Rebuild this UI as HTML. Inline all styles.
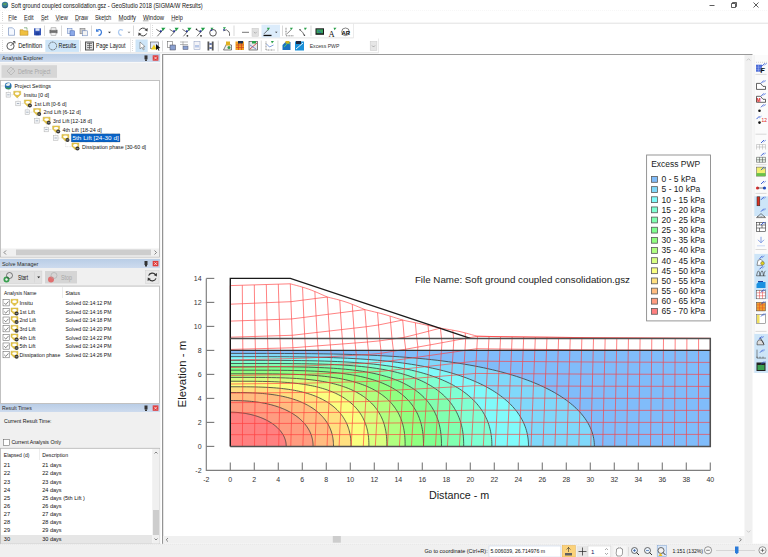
<!DOCTYPE html>
<html><head><meta charset="utf-8">
<style>
*{margin:0;padding:0}
html,body{width:768px;height:557px;overflow:hidden;background:#fff}
svg{position:absolute;left:0;top:0;font-family:"Liberation Sans",sans-serif}
</style></head><body>
<svg width="768" height="557" viewBox="0 0 768 557" font-family="Liberation Sans" font-size="8" fill="#333">
<rect x="0" y="0" width="768" height="557" fill="#fff"/>
<circle cx="5" cy="5" r="3.2" fill="#3a7a9a"/><path d="M2.6,4.2 Q4.5,2.4 6.8,3.2 L6,5.2 Q4,5.6 2.6,4.2Z" fill="#5aa060"/><path d="M3,6.6 Q5,7.8 7.6,6 L7,7.8 Q5,8.8 3,7.4Z" fill="#2a5a7a"/>
<text x="11.00" y="8.00" font-size="6.6" fill="#111" stroke="#111" stroke-width="0" textLength="191.60" lengthAdjust="spacingAndGlyphs" >Soft ground coupled consolidation.gsz - GeoStudio 2018 (SIGMA/W Results)</text>
<line x1="709.50" y1="5.50" x2="714.50" y2="5.50" stroke="#333" stroke-width="0.8" />
<path d="M731.5,3.5 h4 v4 h-4z M732.5,3.5 v-1 h4 v4 h-1" fill="none" stroke="#333" stroke-width="0.8"/>
<path d="M753.5,2.5 L758.5,7.5 M758.5,2.5 L753.5,7.5" stroke="#333" stroke-width="0.8"/>
<line x1="0.00" y1="10.50" x2="768.00" y2="10.50" stroke="#f2f2f2" stroke-width="0.6" stroke-dasharray="1 1"/>
<text x="8.25" y="19.60" font-size="6.6" fill="#202020" stroke="#202020" stroke-width="0" textLength="8.65" lengthAdjust="spacingAndGlyphs" >File</text>
<text x="24.00" y="19.60" font-size="6.6" fill="#202020" stroke="#202020" stroke-width="0" textLength="9.50" lengthAdjust="spacingAndGlyphs" >Edit</text>
<text x="41.00" y="19.60" font-size="6.6" fill="#202020" stroke="#202020" stroke-width="0" textLength="7.40" lengthAdjust="spacingAndGlyphs" >Set</text>
<text x="55.60" y="19.60" font-size="6.6" fill="#202020" stroke="#202020" stroke-width="0" textLength="12.40" lengthAdjust="spacingAndGlyphs" >View</text>
<text x="75.00" y="19.60" font-size="6.6" fill="#202020" stroke="#202020" stroke-width="0" textLength="13.00" lengthAdjust="spacingAndGlyphs" >Draw</text>
<text x="95.00" y="19.60" font-size="6.6" fill="#202020" stroke="#202020" stroke-width="0" textLength="16.25" lengthAdjust="spacingAndGlyphs" >Sketch</text>
<text x="118.50" y="19.60" font-size="6.6" fill="#202020" stroke="#202020" stroke-width="0" textLength="17.50" lengthAdjust="spacingAndGlyphs" >Modify</text>
<text x="142.90" y="19.60" font-size="6.6" fill="#202020" stroke="#202020" stroke-width="0" textLength="21.20" lengthAdjust="spacingAndGlyphs" >Window</text>
<text x="171.25" y="19.60" font-size="6.6" fill="#202020" stroke="#202020" stroke-width="0" textLength="11.50" lengthAdjust="spacingAndGlyphs" >Help</text>
<line x1="8.25" y1="20.80" x2="11.53" y2="20.80" stroke="#555" stroke-width="0.5" />
<line x1="24.00" y1="20.80" x2="27.68" y2="20.80" stroke="#555" stroke-width="0.5" />
<line x1="41.00" y1="20.80" x2="44.29" y2="20.80" stroke="#555" stroke-width="0.5" />
<line x1="55.60" y1="20.80" x2="59.45" y2="20.80" stroke="#555" stroke-width="0.5" />
<line x1="75.00" y1="20.80" x2="79.02" y2="20.80" stroke="#555" stroke-width="0.5" />
<line x1="104.16" y1="20.80" x2="105.64" y2="20.80" stroke="#555" stroke-width="0.5" />
<line x1="118.50" y1="20.80" x2="123.45" y2="20.80" stroke="#555" stroke-width="0.5" />
<line x1="142.90" y1="20.80" x2="148.53" y2="20.80" stroke="#555" stroke-width="0.5" />
<line x1="171.25" y1="20.80" x2="175.29" y2="20.80" stroke="#555" stroke-width="0.5" />
<line x1="2.50" y1="12.00" x2="2.50" y2="22.00" stroke="#bbb" stroke-width="0.6" stroke-dasharray="1 1"/>
<line x1="0.00" y1="23.20" x2="768.00" y2="23.20" stroke="#dedede" stroke-width="0.9" />
<line x1="0.00" y1="37.90" x2="353.50" y2="37.90" stroke="#e2e2e2" stroke-width="0.9" />
<line x1="353.50" y1="23.50" x2="353.50" y2="38.00" stroke="#e6e6e6" stroke-width="0.8" />
<line x1="2.50" y1="25.00" x2="2.50" y2="36.00" stroke="#c0c0c0" stroke-width="0.6" stroke-dasharray="1 1"/>
<line x1="44.50" y1="25.50" x2="44.50" y2="36.00" stroke="#cfcfcf" stroke-width="0.8" />
<line x1="61.50" y1="25.50" x2="61.50" y2="36.00" stroke="#cfcfcf" stroke-width="0.8" />
<line x1="91.50" y1="25.50" x2="91.50" y2="36.00" stroke="#cfcfcf" stroke-width="0.8" />
<line x1="133.50" y1="25.50" x2="133.50" y2="36.00" stroke="#cfcfcf" stroke-width="0.8" />
<line x1="234.00" y1="25.50" x2="234.00" y2="36.00" stroke="#cfcfcf" stroke-width="0.8" />
<line x1="282.50" y1="25.50" x2="282.50" y2="36.00" stroke="#cfcfcf" stroke-width="0.8" />
<line x1="311.00" y1="25.50" x2="311.00" y2="36.00" stroke="#cfcfcf" stroke-width="0.8" />
<line x1="150.50" y1="23.50" x2="150.50" y2="38.00" stroke="#e6e6e6" stroke-width="0.8" />
<line x1="152.50" y1="25.00" x2="152.50" y2="36.00" stroke="#c0c0c0" stroke-width="0.6" stroke-dasharray="1 1"/>
<g transform="translate(0,0.8)">
<path d="M8.5,27 h4 l2,2 v5.5 h-6z" fill="#f4f8ff" stroke="#6a86b8" stroke-width="0.6"/>
<path d="M20,29 h3 l1,1 h4 v4.5 h-8z" fill="#f0c040" stroke="#b08020" stroke-width="0.5"/><path d="M24,27 l3,0 l0,2" fill="none" stroke="#4a8a4a" stroke-width="0.6"/>
<rect x="34" y="27.5" width="7" height="7" fill="#3858b8"/><rect x="35.5" y="27.5" width="4" height="2.5" fill="#dfe6f5"/><rect x="35.5" y="31.5" width="4" height="3" fill="#2040a0"/>
<rect x="49.5" y="29" width="8" height="3.5" fill="#707070"/><rect x="51" y="27" width="5" height="2.5" fill="#e8e8e8" stroke="#777" stroke-width="0.4"/><rect x="51" y="32" width="5" height="2.5" fill="#f0f0f0" stroke="#777" stroke-width="0.4"/>
<rect x="67.5" y="27.5" width="4.5" height="5" fill="#dfe8f8" stroke="#5a7ab8" stroke-width="0.5"/><rect x="70" y="30" width="4.5" height="5" fill="#8aa8e8" stroke="#3a5aa8" stroke-width="0.5"/>
<rect x="80" y="27.5" width="5" height="5.5" fill="#c8c8c8" stroke="#707070" stroke-width="0.5"/><rect x="82.5" y="30" width="5" height="5" fill="#f4f4f4" stroke="#5a7ab8" stroke-width="0.5"/>
<path d="M97,29.5 q4,-2 4.5,2 q-0.5,3 -3,3" fill="none" stroke="#3a7ad8" stroke-width="1.2"/><path d="M96,28 l0,3 l3,0z" fill="#3a7ad8"/>
<path d="M108,31 h3 l-1.5,1.5z" fill="#333"/>
<path d="M123,29.5 q-4,-2 -4.5,2 q0.5,3 3,3" fill="none" stroke="#a8c8f0" stroke-width="1.2"/>
<path d="M127.5,31 h3 l-1.5,1.5z" fill="#888"/>
<g transform="translate(-9.3,-245.8)"><path d="M148.6,275.6 A4,4 0 0 1 155.6,274.8 M156,278.4 A4,4 0 0 1 149,279.2" fill="none" stroke="#444" stroke-width="1"/><path d="M157,273 l-0.2,3.6 l-3.2,-1.6z M147.6,281 l0.2,-3.6 l3.2,1.6z" fill="#444"/></g>
<path d="M156.3,28.5 L160.8,31.5" stroke="#333" stroke-width="0.7"/><path d="M157.3,35.5 L163.8,28" stroke="#333" stroke-width="0.7"/><path d="M161.3,27 h4.2 l-2.6,3.2z" fill="#22a048"/><rect x="159.9" y="29.5" width="1.8" height="1.8" fill="#2a3a9a"/>
<path d="M169.6,28.5 L174.1,31.5" stroke="#333" stroke-width="0.7"/><path d="M170.6,35.5 L177.1,28" stroke="#333" stroke-width="0.7"/><path d="M174.6,27 h4.2 l-2.6,3.2z" fill="#22a048"/><rect x="173.2" y="29.5" width="1.8" height="1.8" fill="#2a3a9a"/>
<path d="M182.4,28.5 L186.9,31.5" stroke="#333" stroke-width="0.7"/><path d="M183.4,35.5 L189.9,28" stroke="#333" stroke-width="0.7"/><path d="M187.4,27 h4.2 l-2.6,3.2z" fill="#22a048"/><rect x="186.0" y="29.5" width="1.8" height="1.8" fill="#2a3a9a"/>
<circle cx="187.4" cy="35" r="0.9" fill="#222"/>
<path d="M196.0,28.5 L200.5,31.5" stroke="#333" stroke-width="0.7"/><path d="M197.0,35.5 L203.5,28" stroke="#333" stroke-width="0.7"/><path d="M201.0,27 h4.2 l-2.6,3.2z" fill="#22a048"/><rect x="199.6" y="29.5" width="1.8" height="1.8" fill="#2a3a9a"/>
<circle cx="201.0" cy="35" r="0.9" fill="#222"/>
<circle cx="196.5" cy="28.5" r="0.8" fill="#222"/>
<circle cx="213" cy="32" r="3.3" fill="none" stroke="#444" stroke-width="0.9"/><path d="M210.5,27 l3,0 l-1.8,2.2z" fill="#22a048"/><rect x="210.8" y="28.6" width="1.5" height="1.5" fill="#2a3a9a"/>
<path d="M223.5,30 q3,-2.5 5.5,1 q0.8,1.5 0.5,4" fill="none" stroke="#444" stroke-width="0.8"/><path d="M223,26.5 l3,0 l-1.8,2.2z" fill="#22a048"/><rect x="223.2" y="28.3" width="1.5" height="1.5" fill="#2a3a9a"/>
<line x1="242.00" y1="31.50" x2="249.00" y2="31.50" stroke="#666" stroke-width="0.9" />
<rect x="252.00" y="27.50" width="6.50" height="8.00" fill="#e0e0e0" stroke="#c8c8c8" stroke-width="0.5" />
<path d="M253.8,31 l1.5,1.5 l1.5,-1.5" fill="none" stroke="#888" stroke-width="0.5"/>
<rect x="261.50" y="23.90" width="18.50" height="12.80" fill="#dcecfb" />
<path d="M264,33 L268,29" stroke="#333" stroke-width="0.7"/><path d="M267,27 l3,0 l-2,3z" fill="#2aa04a"/>
<rect x="263.50" y="34.00" width="8.00" height="1.30" fill="#111" />
<path d="M275,31 h2.5 l-1.25,1.2z" fill="#333"/>
<path d="M286,27 v8 h8" fill="none" stroke="#444" stroke-width="0.7" stroke-dasharray="1 0.6"/><path d="M287,33 l4,-4" stroke="#333" stroke-width="0.6"/><path d="M290,27 l3,0 l-2,2.5z" fill="#2aa04a"/>
<path d="M300,29 l3,3 l1,2.5" stroke="#333" stroke-width="0.7" fill="none"/><path d="M304,27 l3,0 l-2,2.5z" fill="#2aa04a"/><circle cx="300" cy="29" r="0.7" fill="#333"/><circle cx="304.5" cy="34.5" r="0.7" fill="#333"/>
<rect x="315.50" y="27.50" width="8.50" height="6.50" fill="#1a1a1a" />
<rect x="316.50" y="28.50" width="6.50" height="4.00" fill="#3aa060" />
<path d="M318,30 l3,2" stroke="#2060c0" stroke-width="0.8"/>
<text x="328.5" y="36" font-size="8.5" font-family="Liberation Serif" fill="#111">A</text><path d="M333.5,27 l3,0 l-2,2.5z" fill="#2aa04a"/>
<circle cx="345.5" cy="31" r="3.8" fill="none" stroke="#333" stroke-width="0.6"/><text x="341.5" y="34" font-size="6" font-weight="bold" fill="#111">AR</text>
</g>
<line x1="0.00" y1="52.80" x2="378.50" y2="52.80" stroke="#e0e0e0" stroke-width="0.9" />
<line x1="378.50" y1="38.50" x2="378.50" y2="53.00" stroke="#e6e6e6" stroke-width="0.8" />
<line x1="2.50" y1="40.00" x2="2.50" y2="51.00" stroke="#c0c0c0" stroke-width="0.6" stroke-dasharray="1 1"/>
<circle cx="10.5" cy="46" r="3.6" fill="none" stroke="#333" stroke-width="0.8"/><path d="M10.5,46 l4,-4 m-1.5,-0.5 l2,0 l0,2" fill="none" stroke="#333" stroke-width="0.8"/>
<text x="18.20" y="48.20" font-size="6.4" fill="#111" stroke="#111" stroke-width="0" textLength="24.10" lengthAdjust="spacingAndGlyphs" >Definition</text>
<rect x="45.30" y="39.80" width="33.90" height="12.10" fill="#cde5f8" />
<circle cx="52.7" cy="46" r="3.9" fill="none" stroke="#333" stroke-width="0.7" stroke-dasharray="1.2 0.5"/>
<text x="58.60" y="48.20" font-size="6.4" fill="#111" stroke="#111" stroke-width="0" textLength="17.60" lengthAdjust="spacingAndGlyphs" >Results</text>
<line x1="80.50" y1="40.50" x2="80.50" y2="51.50" stroke="#cfcfcf" stroke-width="0.8" />
<rect x="85.00" y="41.50" width="9.00" height="9.00" fill="#555" />
<rect x="86.00" y="42.50" width="7.00" height="7.00" fill="#ddd" />
<path d="M87,43.5 h5 M87,45.5 h5 M87,47.5 h5 M89.5,43 v6" stroke="#444" stroke-width="0.6"/>
<text x="96.00" y="48.20" font-size="6.4" fill="#111" stroke="#111" stroke-width="0" textLength="29.50" lengthAdjust="spacingAndGlyphs" >Page Layout</text>
<line x1="130.50" y1="38.50" x2="130.50" y2="53.00" stroke="#e6e6e6" stroke-width="0.8" />
<line x1="132.50" y1="40.00" x2="132.50" y2="51.00" stroke="#c0c0c0" stroke-width="0.6" stroke-dasharray="1 1"/>
<rect x="135.50" y="39.50" width="12.20" height="12.50" fill="#cde5f8" />
<path d="M140,42 l0,7 l1.8,-1.6 l1.5,2.5 l1,-0.6 l-1.5,-2.3 l2.3,-0.3z" fill="#fff" stroke="#555" stroke-width="0.5"/>
<rect x="150.50" y="42.00" width="8.00" height="6.50" fill="#dfe6f8" stroke="#555" stroke-width="0.6" />
<path d="M151,49.5 l3,-5 l3,5z" fill="#f0d020"/><path d="M156,44 l0,6 l1.5,-1.3 l1.2,2 l0.8,-0.5 l-1.2,-1.8 l2,-0.3z" fill="#111"/>
<line x1="162.50" y1="40.50" x2="162.50" y2="51.50" stroke="#cfcfcf" stroke-width="0.8" />
<line x1="218.30" y1="40.50" x2="218.30" y2="51.50" stroke="#cfcfcf" stroke-width="0.8" />
<line x1="261.25" y1="40.50" x2="261.25" y2="51.50" stroke="#cfcfcf" stroke-width="0.8" />
<line x1="277.90" y1="40.50" x2="277.90" y2="51.50" stroke="#cfcfcf" stroke-width="0.8" />
<rect x="167.5" y="41.5" width="5" height="6" fill="#fff" stroke="#555" stroke-width="0.5"/><rect x="170" y="45" width="5.5" height="5" fill="#8aa0d0" stroke="#445" stroke-width="0.5"/>
<path d="M180,42 h8 M180,44.5 h8 M183,41.5 v4" stroke="#8a8a8a" stroke-width="0.6"/><rect x="183" y="46" width="5" height="3.5" fill="#8aa0d0" stroke="#556" stroke-width="0.5"/>
<rect x="194" y="41.5" width="6" height="8" fill="#f4f4f8" stroke="#8a9ac0" stroke-width="0.5"/><rect x="195" y="45" width="4" height="2.5" fill="#b8c8e8"/>
<rect x="207.5" y="41.5" width="1.8" height="9" fill="#555"/><rect x="211.8" y="41.5" width="1.8" height="9" fill="#555"/><rect x="209.3" y="43" width="2.5" height="2" fill="#6a7aa8"/><rect x="209.3" y="47" width="2.5" height="2" fill="#6a7aa8"/>
<path d="M223.5,50 l3,-6 l5,1 l0,5z" fill="#eee" stroke="#333" stroke-width="0.6"/><rect x="226" y="41.5" width="4" height="4" fill="#e0b020"/><circle cx="229" cy="47.5" r="1.5" fill="#3a9a4a"/>
<rect x="235.5" y="41.5" width="8.5" height="8.5" fill="#f0a020"/><path d="M236,45 h8 M236,47.5 h8 M238.5,42 v8 M241.5,42 v8" stroke="#d04020" stroke-width="0.7"/><rect x="238" y="41" width="5" height="2.5" fill="#203050"/>
<rect x="249" y="41.5" width="8.5" height="8.5" fill="#e8e8e8" stroke="#333" stroke-width="0.6"/><path d="M250,49 l7,-6" stroke="#d03030" stroke-width="0.8"/><path d="M250,45 l6,4" stroke="#3050c0" stroke-width="0.6"/><rect x="252" y="41" width="4" height="2.5" fill="#2aa04a"/>
<path d="M266,41.5 v8.5 h8.5" fill="none" stroke="#444" stroke-width="0.6" stroke-dasharray="1 0.5"/><path d="M266.5,44 l3,3 l4,-2" fill="none" stroke="#3060c0" stroke-width="0.6"/><path d="M271,41 l3,0 l-2,2.5z" fill="#2aa04a"/>
<path d="M282.5,50 l0,-5 l3,-3 l5,0 l0,8z" fill="#1a70c0"/><path d="M284,47 l4,-4 l2,1" fill="none" stroke="#50d060" stroke-width="0.9"/><rect x="285.5" y="41" width="4" height="2.5" fill="#d0b020"/>
<rect x="295" y="41.5" width="9" height="9" fill="#1a90d8"/><path d="M296,49 l7,-6" stroke="#fff" stroke-width="0.9"/><rect x="296" y="41" width="5" height="3" fill="#202840"/>
<text x="309.70" y="48.30" font-size="6.2" fill="#333" stroke="#333" stroke-width="0" textLength="29.70" lengthAdjust="spacingAndGlyphs" >Excess PWP</text>
<rect x="370.20" y="41.50" width="6.70" height="9.00" fill="#e6e6e6" stroke="#c8c8c8" stroke-width="0.5" />
<path d="M372,45.5 l1.5,1.5 l1.5,-1.5" fill="none" stroke="#777" stroke-width="0.5"/><rect x="0.00" y="53.50" width="160.50" height="490.50" fill="#f0f0f0" />
<defs><linearGradient id="hg" x1="0" y1="0" x2="0" y2="1"><stop offset="0" stop-color="#b9cde6"/><stop offset="1" stop-color="#cddbee"/></linearGradient></defs>
<rect x="0.00" y="53.80" width="160.00" height="8.20" fill="url(#hg)" />
<text x="2.00" y="60.00" font-size="6.2" fill="#2a2a2a" stroke="#2a2a2a" stroke-width="0" textLength="41.00" lengthAdjust="spacingAndGlyphs" >Analysis Explorer</text>
<rect x="144.5" y="55.40" width="3" height="4" fill="#333"/><rect x="145" y="59.40" width="2" height="1.5" fill="#333"/>
<rect x="152.70" y="55.30" width="5.70" height="5.40" fill="#de3b3b" />
<path d="M154.2,56.70 l2.7,2.7 M156.9,56.70 l-2.7,2.7" stroke="#fff" stroke-width="0.7"/>
<line x1="0.00" y1="62.40" x2="160.00" y2="62.40" stroke="#fafafa" stroke-width="0.8" />
<rect x="1.50" y="65.20" width="55.50" height="12.60" fill="#d6d6d6" />
<path d="M7,71 l4,-4 l4,4 l-4,4z" fill="none" stroke="#b0b0b0" stroke-width="0.7"/><path d="M9,73 l5,-5" stroke="#b8b8b8" stroke-width="0.6"/>
<text x="18.00" y="73.80" font-size="6.4" fill="#a6a6a6" stroke="#a6a6a6" stroke-width="0" textLength="32.50" lengthAdjust="spacingAndGlyphs" >Define Project</text>
<rect x="0.50" y="80.50" width="159.00" height="176.50" fill="#fff" stroke="#b4b4b4" stroke-width="0.8" />
<line x1="1.00" y1="85.90" x2="4.50" y2="85.90" stroke="#c8c8c8" stroke-width="0.5" />
<line x1="8.40" y1="89.30" x2="8.40" y2="92.50" stroke="#c4c4c4" stroke-width="0.5" stroke-dasharray="0.8 0.7"/>
<line x1="10.70" y1="94.80" x2="13.50" y2="94.80" stroke="#c4c4c4" stroke-width="0.5" stroke-dasharray="0.8 0.7"/>
<line x1="18.10" y1="98.20" x2="18.10" y2="101.20" stroke="#c4c4c4" stroke-width="0.5" stroke-dasharray="0.8 0.7"/>
<line x1="20.40" y1="103.50" x2="24.10" y2="103.50" stroke="#c4c4c4" stroke-width="0.5" stroke-dasharray="0.8 0.7"/>
<line x1="27.40" y1="106.90" x2="27.40" y2="109.90" stroke="#c4c4c4" stroke-width="0.5" stroke-dasharray="0.8 0.7"/>
<line x1="29.70" y1="112.20" x2="33.40" y2="112.20" stroke="#c4c4c4" stroke-width="0.5" stroke-dasharray="0.8 0.7"/>
<line x1="36.90" y1="115.60" x2="36.90" y2="118.50" stroke="#c4c4c4" stroke-width="0.5" stroke-dasharray="0.8 0.7"/>
<line x1="39.20" y1="120.80" x2="42.90" y2="120.80" stroke="#c4c4c4" stroke-width="0.5" stroke-dasharray="0.8 0.7"/>
<line x1="46.40" y1="124.20" x2="46.40" y2="127.20" stroke="#c4c4c4" stroke-width="0.5" stroke-dasharray="0.8 0.7"/>
<line x1="48.70" y1="129.50" x2="52.40" y2="129.50" stroke="#c4c4c4" stroke-width="0.5" stroke-dasharray="0.8 0.7"/>
<line x1="55.70" y1="132.90" x2="55.70" y2="135.70" stroke="#c4c4c4" stroke-width="0.5" stroke-dasharray="0.8 0.7"/>
<line x1="58.00" y1="138.00" x2="61.70" y2="138.00" stroke="#c4c4c4" stroke-width="0.5" stroke-dasharray="0.8 0.7"/>
<line x1="65.70" y1="141.40" x2="65.70" y2="146.70" stroke="#c4c4c4" stroke-width="0.5" stroke-dasharray="0.8 0.7"/>
<line x1="65.70" y1="146.70" x2="71.70" y2="146.70" stroke="#c4c4c4" stroke-width="0.5" stroke-dasharray="0.8 0.7"/>
<circle cx="8.2" cy="85.9" r="3.4" fill="#2a70b0"/><path d="M5.4,84.9 q2,-2.5 5,-1.5 l-0.8,2.2 q-2,1.2 -4.2,-0.7z" fill="#e8f0f0"/><path d="M5.6,87.10000000000001 q3,1.8 5.4,-0.4 l-0.6,2 q-2.5,1.2 -4.6,-0.4z" fill="#3a9a50"/>
<text x="14.40" y="88.10" font-size="6.2" fill="#111" stroke="#111" stroke-width="0" textLength="36.50" lengthAdjust="spacingAndGlyphs" >Project Settings</text>
<path d="M13.7,91.2 h7 v3.2 l-3.5,3.6 l-3.5,-3.6z" fill="#e4c44a" stroke="#c8a830" stroke-width="0.4"/>
<ellipse cx="17.2" cy="93.6" rx="2.3" ry="1.4" fill="#fff"/>
<rect x="6.10" y="92.50" width="4.60" height="4.60" fill="#f4f6f8" stroke="#b0b0b0" stroke-width="0.5" />
<line x1="7.20" y1="94.80" x2="9.60" y2="94.80" stroke="#7a8aa0" stroke-width="0.6" />
<text x="23.70" y="97.00" font-size="6.2" fill="#111" stroke="#111" stroke-width="0" textLength="25.40" lengthAdjust="spacingAndGlyphs" >Insitu [0 d]</text>
<path d="M24.299999999999997,99.9 h7 v3.2 l-3.5,3.6 l-3.5,-3.6z" fill="#e4c44a" stroke="#c8a830" stroke-width="0.4"/>
<ellipse cx="27.799999999999997" cy="102.3" rx="2.3" ry="1.4" fill="#fff"/>
<circle cx="29.9" cy="105.4" r="2" fill="#333"/><path d="M28.9,105.4 h2" stroke="#ddd" stroke-width="0.6"/>
<rect x="15.80" y="101.20" width="4.60" height="4.60" fill="#f4f6f8" stroke="#b0b0b0" stroke-width="0.5" />
<line x1="16.90" y1="103.50" x2="19.30" y2="103.50" stroke="#7a8aa0" stroke-width="0.6" />
<text x="34.30" y="105.70" font-size="6.2" fill="#111" stroke="#111" stroke-width="0" textLength="32.10" lengthAdjust="spacingAndGlyphs" >1st Lift [0-6 d]</text>
<path d="M33.6,108.60000000000001 h7 v3.2 l-3.5,3.6 l-3.5,-3.6z" fill="#e4c44a" stroke="#c8a830" stroke-width="0.4"/>
<ellipse cx="37.1" cy="111.0" rx="2.3" ry="1.4" fill="#fff"/>
<circle cx="39.2" cy="114.10000000000001" r="2" fill="#333"/><path d="M38.2,114.10000000000001 h2" stroke="#ddd" stroke-width="0.6"/>
<rect x="25.10" y="109.90" width="4.60" height="4.60" fill="#f4f6f8" stroke="#b0b0b0" stroke-width="0.5" />
<line x1="26.20" y1="112.20" x2="28.60" y2="112.20" stroke="#7a8aa0" stroke-width="0.6" />
<text x="43.60" y="114.40" font-size="6.2" fill="#111" stroke="#111" stroke-width="0" textLength="37.20" lengthAdjust="spacingAndGlyphs" >2nd Lift [6-12 d]</text>
<path d="M43.1,117.2 h7 v3.2 l-3.5,3.6 l-3.5,-3.6z" fill="#e4c44a" stroke="#c8a830" stroke-width="0.4"/>
<ellipse cx="46.6" cy="119.6" rx="2.3" ry="1.4" fill="#fff"/>
<circle cx="48.7" cy="122.7" r="2" fill="#333"/><path d="M47.7,122.7 h2" stroke="#ddd" stroke-width="0.6"/>
<rect x="34.60" y="118.50" width="4.60" height="4.60" fill="#f4f6f8" stroke="#b0b0b0" stroke-width="0.5" />
<line x1="35.70" y1="120.80" x2="38.10" y2="120.80" stroke="#7a8aa0" stroke-width="0.6" />
<text x="53.10" y="123.00" font-size="6.2" fill="#111" stroke="#111" stroke-width="0" textLength="38.80" lengthAdjust="spacingAndGlyphs" >3rd Lift [12-18 d]</text>
<path d="M52.6,125.9 h7 v3.2 l-3.5,3.6 l-3.5,-3.6z" fill="#e4c44a" stroke="#c8a830" stroke-width="0.4"/>
<ellipse cx="56.1" cy="128.3" rx="2.3" ry="1.4" fill="#fff"/>
<circle cx="58.2" cy="131.4" r="2" fill="#333"/><path d="M57.2,131.4 h2" stroke="#ddd" stroke-width="0.6"/>
<rect x="44.10" y="127.20" width="4.60" height="4.60" fill="#f4f6f8" stroke="#b0b0b0" stroke-width="0.5" />
<line x1="45.20" y1="129.50" x2="47.60" y2="129.50" stroke="#7a8aa0" stroke-width="0.6" />
<text x="62.60" y="131.70" font-size="6.2" fill="#111" stroke="#111" stroke-width="0" textLength="39.20" lengthAdjust="spacingAndGlyphs" >4th Lift [18-24 d]</text>
<path d="M61.900000000000006,134.4 h7 v3.2 l-3.5,3.6 l-3.5,-3.6z" fill="#e4c44a" stroke="#c8a830" stroke-width="0.4"/>
<ellipse cx="65.4" cy="136.8" rx="2.3" ry="1.4" fill="#fff"/>
<circle cx="67.5" cy="139.9" r="2" fill="#333"/><path d="M66.5,139.9 h2" stroke="#ddd" stroke-width="0.6"/>
<rect x="53.40" y="135.70" width="4.60" height="4.60" fill="#f4f6f8" stroke="#b0b0b0" stroke-width="0.5" />
<line x1="54.50" y1="138.00" x2="56.90" y2="138.00" stroke="#7a8aa0" stroke-width="0.6" />
<rect x="71.30" y="133.80" width="48.70" height="8.20" fill="#0a64c8" />
<rect x="71.30" y="133.80" width="48.70" height="8.20" fill="none" stroke="#222" stroke-width="0.4" stroke-dasharray="0.6 0.6"/>
<text x="72.50" y="140.20" font-size="6.2" fill="#fff" stroke="#fff" stroke-width="0" textLength="46.30" lengthAdjust="spacingAndGlyphs" >5th Lift [24-30 d]</text>
<path d="M71.9,143.1 h7 v3.2 l-3.5,3.6 l-3.5,-3.6z" fill="#e4c44a" stroke="#c8a830" stroke-width="0.4"/>
<ellipse cx="75.4" cy="145.5" rx="2.3" ry="1.4" fill="#fff"/>
<circle cx="77.5" cy="148.6" r="2" fill="#333"/><path d="M76.5,148.6 h2" stroke="#ddd" stroke-width="0.6"/>
<text x="81.90" y="148.90" font-size="6.2" fill="#111" stroke="#111" stroke-width="0" textLength="64.20" lengthAdjust="spacingAndGlyphs" >Dissipation phase [30-60 d]</text>
<rect x="1.00" y="248.50" width="158.00" height="7.80" fill="#f0f0f0" />
<rect x="16.00" y="249.50" width="135.00" height="5.80" fill="#cdcdcd" />
<path d="M6,250.5 l-2,2 l2,2 M154.5,250.5 l2,2 l-2,2" fill="none" stroke="#555" stroke-width="0.7"/>
<defs><linearGradient id="hg" x1="0" y1="0" x2="0" y2="1"><stop offset="0" stop-color="#b9cde6"/><stop offset="1" stop-color="#cddbee"/></linearGradient></defs>
<rect x="0.00" y="259.00" width="160.00" height="9.00" fill="url(#hg)" />
<text x="2.00" y="266.00" font-size="6.2" fill="#2a2a2a" stroke="#2a2a2a" stroke-width="0" textLength="36.40" lengthAdjust="spacingAndGlyphs" >Solve Manager</text>
<rect x="144.5" y="261.00" width="3" height="4" fill="#333"/><rect x="145" y="265.00" width="2" height="1.5" fill="#333"/>
<rect x="152.70" y="260.90" width="5.70" height="5.40" fill="#de3b3b" />
<path d="M154.2,262.30 l2.7,2.7 M156.9,262.30 l-2.7,2.7" stroke="#fff" stroke-width="0.7"/>
<rect x="0.50" y="271.00" width="41.40" height="12.50" fill="#e1e1e1" stroke="#cfcfcf" stroke-width="0.5" />
<line x1="34.50" y1="272.00" x2="34.50" y2="282.50" stroke="#cfcfcf" stroke-width="0.5" />
<path d="M37.2,276.5 h3 l-1.5,1.8z" fill="#222"/>
<circle cx="6.5" cy="279.5" r="3" fill="#3aa050"/><circle cx="6.5" cy="279.5" r="1.2" fill="#eee"/><circle cx="9.5" cy="275.5" r="3" fill="none" stroke="#333" stroke-width="0.6"/>
<text x="18.00" y="280.20" font-size="6.4" fill="#111" stroke="#111" stroke-width="0" textLength="10.00" lengthAdjust="spacingAndGlyphs" >Start</text>
<rect x="45.00" y="271.00" width="32.00" height="12.50" fill="#d5d5d5" />
<circle cx="51" cy="279.5" r="3" fill="#e07070"/><circle cx="54" cy="275.5" r="3" fill="none" stroke="#aaa" stroke-width="0.6"/>
<text x="61.00" y="280.20" font-size="6.4" fill="#a8a8a8" stroke="#a8a8a8" stroke-width="0" textLength="11.00" lengthAdjust="spacingAndGlyphs" >Stop</text>
<rect x="145.50" y="270.50" width="13.50" height="13.00" fill="#e8e8e8" stroke="#cfcfcf" stroke-width="0.5" />
<path d="M148.6,275.6 A4,4 0 0 1 155.6,274.8 M156,278.4 A4,4 0 0 1 149,279.2" fill="none" stroke="#333" stroke-width="1.1"/><path d="M157,273 l-0.2,3.6 l-3.2,-1.6z M147.6,281 l0.2,-3.6 l3.2,1.6z" fill="#333"/>
<rect x="0.50" y="286.10" width="159.00" height="117.40" fill="#fff" stroke="#b4b4b4" stroke-width="0.8" />
<text x="4.00" y="294.50" font-size="6.2" fill="#111" stroke="#111" stroke-width="0" textLength="32.50" lengthAdjust="spacingAndGlyphs" >Analysis Name</text>
<line x1="62.50" y1="287.00" x2="62.50" y2="298.00" stroke="#e0e0e0" stroke-width="0.6" />
<text x="65.50" y="294.50" font-size="6.2" fill="#111" stroke="#111" stroke-width="0" textLength="14.50" lengthAdjust="spacingAndGlyphs" >Status</text>
<rect x="3.00" y="299.70" width="6.20" height="6.20" fill="#fff" stroke="#555" stroke-width="0.5" />
<path d="M4.2,302.90 l1.6,1.6 l2.6,-3" fill="none" stroke="#333" stroke-width="0.6"/>
<path d="M11,299.29999999999995 h7 v3.2 l-3.5,3.6 l-3.5,-3.6z" fill="#e4c44a" stroke="#c8a830" stroke-width="0.4"/>
<ellipse cx="14.5" cy="301.7" rx="2.3" ry="1.4" fill="#fff"/>
<text x="19.50" y="305.10" font-size="6.2" fill="#111" stroke="#111" stroke-width="0" textLength="13.50" lengthAdjust="spacingAndGlyphs" >Insitu</text>
<text x="65.50" y="305.10" font-size="6.2" fill="#111" stroke="#111" stroke-width="0" textLength="46.00" lengthAdjust="spacingAndGlyphs" >Solved 02:14:12 PM</text>
<rect x="3.00" y="308.35" width="6.20" height="6.20" fill="#fff" stroke="#555" stroke-width="0.5" />
<path d="M4.2,311.55 l1.6,1.6 l2.6,-3" fill="none" stroke="#333" stroke-width="0.6"/>
<path d="M11,307.94999999999993 h7 v3.2 l-3.5,3.6 l-3.5,-3.6z" fill="#e4c44a" stroke="#c8a830" stroke-width="0.4"/>
<ellipse cx="14.5" cy="310.34999999999997" rx="2.3" ry="1.4" fill="#fff"/>
<circle cx="16.6" cy="313.44999999999993" r="2" fill="#333"/><path d="M15.6,313.44999999999993 h2" stroke="#ddd" stroke-width="0.6"/>
<text x="19.50" y="313.75" font-size="6.2" fill="#111" stroke="#111" stroke-width="0" textLength="15.50" lengthAdjust="spacingAndGlyphs" >1st Lift</text>
<text x="65.50" y="313.75" font-size="6.2" fill="#111" stroke="#111" stroke-width="0" textLength="46.00" lengthAdjust="spacingAndGlyphs" >Solved 02:14:16 PM</text>
<rect x="3.00" y="317.00" width="6.20" height="6.20" fill="#fff" stroke="#555" stroke-width="0.5" />
<path d="M4.2,320.20 l1.6,1.6 l2.6,-3" fill="none" stroke="#333" stroke-width="0.6"/>
<path d="M11,316.59999999999997 h7 v3.2 l-3.5,3.6 l-3.5,-3.6z" fill="#e4c44a" stroke="#c8a830" stroke-width="0.4"/>
<ellipse cx="14.5" cy="319.0" rx="2.3" ry="1.4" fill="#fff"/>
<circle cx="16.6" cy="322.09999999999997" r="2" fill="#333"/><path d="M15.6,322.09999999999997 h2" stroke="#ddd" stroke-width="0.6"/>
<text x="19.50" y="322.40" font-size="6.2" fill="#111" stroke="#111" stroke-width="0" textLength="16.50" lengthAdjust="spacingAndGlyphs" >2nd Lift</text>
<text x="65.50" y="322.40" font-size="6.2" fill="#111" stroke="#111" stroke-width="0" textLength="46.00" lengthAdjust="spacingAndGlyphs" >Solved 02:14:18 PM</text>
<rect x="3.00" y="325.65" width="6.20" height="6.20" fill="#fff" stroke="#555" stroke-width="0.5" />
<path d="M4.2,328.85 l1.6,1.6 l2.6,-3" fill="none" stroke="#333" stroke-width="0.6"/>
<path d="M11,325.24999999999994 h7 v3.2 l-3.5,3.6 l-3.5,-3.6z" fill="#e4c44a" stroke="#c8a830" stroke-width="0.4"/>
<ellipse cx="14.5" cy="327.65" rx="2.3" ry="1.4" fill="#fff"/>
<circle cx="16.6" cy="330.74999999999994" r="2" fill="#333"/><path d="M15.6,330.74999999999994 h2" stroke="#ddd" stroke-width="0.6"/>
<text x="19.50" y="331.05" font-size="6.2" fill="#111" stroke="#111" stroke-width="0" textLength="16.00" lengthAdjust="spacingAndGlyphs" >3rd Lift</text>
<text x="65.50" y="331.05" font-size="6.2" fill="#111" stroke="#111" stroke-width="0" textLength="46.00" lengthAdjust="spacingAndGlyphs" >Solved 02:14:20 PM</text>
<rect x="3.00" y="334.30" width="6.20" height="6.20" fill="#fff" stroke="#555" stroke-width="0.5" />
<path d="M4.2,337.50 l1.6,1.6 l2.6,-3" fill="none" stroke="#333" stroke-width="0.6"/>
<path d="M11,333.9 h7 v3.2 l-3.5,3.6 l-3.5,-3.6z" fill="#e4c44a" stroke="#c8a830" stroke-width="0.4"/>
<ellipse cx="14.5" cy="336.3" rx="2.3" ry="1.4" fill="#fff"/>
<circle cx="16.6" cy="339.4" r="2" fill="#333"/><path d="M15.6,339.4 h2" stroke="#ddd" stroke-width="0.6"/>
<text x="19.50" y="339.70" font-size="6.2" fill="#111" stroke="#111" stroke-width="0" textLength="16.00" lengthAdjust="spacingAndGlyphs" >4th Lift</text>
<text x="65.50" y="339.70" font-size="6.2" fill="#111" stroke="#111" stroke-width="0" textLength="46.00" lengthAdjust="spacingAndGlyphs" >Solved 02:14:22 PM</text>
<rect x="3.00" y="342.95" width="6.20" height="6.20" fill="#fff" stroke="#555" stroke-width="0.5" />
<path d="M4.2,346.15 l1.6,1.6 l2.6,-3" fill="none" stroke="#333" stroke-width="0.6"/>
<path d="M11,342.54999999999995 h7 v3.2 l-3.5,3.6 l-3.5,-3.6z" fill="#e4c44a" stroke="#c8a830" stroke-width="0.4"/>
<ellipse cx="14.5" cy="344.95" rx="2.3" ry="1.4" fill="#fff"/>
<circle cx="16.6" cy="348.04999999999995" r="2" fill="#333"/><path d="M15.6,348.04999999999995 h2" stroke="#ddd" stroke-width="0.6"/>
<text x="19.50" y="348.35" font-size="6.2" fill="#111" stroke="#111" stroke-width="0" textLength="16.00" lengthAdjust="spacingAndGlyphs" >5th Lift</text>
<text x="65.50" y="348.35" font-size="6.2" fill="#111" stroke="#111" stroke-width="0" textLength="46.00" lengthAdjust="spacingAndGlyphs" >Solved 02:14:24 PM</text>
<rect x="3.00" y="351.60" width="6.20" height="6.20" fill="#fff" stroke="#555" stroke-width="0.5" />
<path d="M4.2,354.80 l1.6,1.6 l2.6,-3" fill="none" stroke="#333" stroke-width="0.6"/>
<path d="M11,351.19999999999993 h7 v3.2 l-3.5,3.6 l-3.5,-3.6z" fill="#e4c44a" stroke="#c8a830" stroke-width="0.4"/>
<ellipse cx="14.5" cy="353.59999999999997" rx="2.3" ry="1.4" fill="#fff"/>
<circle cx="16.6" cy="356.69999999999993" r="2" fill="#333"/><path d="M15.6,356.69999999999993 h2" stroke="#ddd" stroke-width="0.6"/>
<text x="19.50" y="357.00" font-size="6.2" fill="#111" stroke="#111" stroke-width="0" textLength="40.80" lengthAdjust="spacingAndGlyphs" >Dissipation  phase</text>
<text x="65.50" y="357.00" font-size="6.2" fill="#111" stroke="#111" stroke-width="0" textLength="46.00" lengthAdjust="spacingAndGlyphs" >Solved 02:14:26 PM</text>
<defs><linearGradient id="hg" x1="0" y1="0" x2="0" y2="1"><stop offset="0" stop-color="#b9cde6"/><stop offset="1" stop-color="#cddbee"/></linearGradient></defs>
<rect x="0.00" y="404.00" width="160.00" height="8.00" fill="url(#hg)" />
<text x="2.00" y="410.00" font-size="6.2" fill="#2a2a2a" stroke="#2a2a2a" stroke-width="0" textLength="29.70" lengthAdjust="spacingAndGlyphs" >Result Times</text>
<rect x="144.5" y="405.50" width="3" height="4" fill="#333"/><rect x="145" y="409.50" width="2" height="1.5" fill="#333"/>
<rect x="152.70" y="405.40" width="5.70" height="5.40" fill="#de3b3b" />
<path d="M154.2,406.80 l2.7,2.7 M156.9,406.80 l-2.7,2.7" stroke="#fff" stroke-width="0.7"/>
<text x="4.00" y="422.60" font-size="6.2" fill="#111" stroke="#111" stroke-width="0" textLength="47.50" lengthAdjust="spacingAndGlyphs" >Current Result Time:</text>
<rect x="3.60" y="439.60" width="6.00" height="6.00" fill="#fff" stroke="#555" stroke-width="0.5" />
<text x="11.40" y="444.40" font-size="6.2" fill="#111" stroke="#111" stroke-width="0" textLength="49.60" lengthAdjust="spacingAndGlyphs" >Current Analysis Only</text>
<rect x="0.50" y="448.30" width="159.00" height="95.50" fill="#fff" stroke="#b4b4b4" stroke-width="0.8" />
<text x="3.80" y="457.20" font-size="6.2" fill="#111" stroke="#111" stroke-width="0" textLength="25.60" lengthAdjust="spacingAndGlyphs" >Elapsed (d)</text>
<line x1="39.50" y1="449.00" x2="39.50" y2="460.00" stroke="#e0e0e0" stroke-width="0.6" />
<text x="42.30" y="457.20" font-size="6.2" fill="#111" stroke="#111" stroke-width="0" textLength="25.70" lengthAdjust="spacingAndGlyphs" >Description</text>
<rect x="1.00" y="535.00" width="151.00" height="8.30" fill="#e6e6e6" />
<text x="3.80" y="467.20" font-size="6.2" fill="#111" stroke="#111" stroke-width="0" textLength="6.34" lengthAdjust="spacingAndGlyphs" >21</text>
<text x="42.30" y="467.20" font-size="6.2" fill="#111" stroke="#111" stroke-width="0" textLength="19.33" lengthAdjust="spacingAndGlyphs" >21 days</text>
<text x="3.80" y="475.35" font-size="6.2" fill="#111" stroke="#111" stroke-width="0" textLength="6.34" lengthAdjust="spacingAndGlyphs" >22</text>
<text x="42.30" y="475.35" font-size="6.2" fill="#111" stroke="#111" stroke-width="0" textLength="19.33" lengthAdjust="spacingAndGlyphs" >22 days</text>
<text x="3.80" y="483.50" font-size="6.2" fill="#111" stroke="#111" stroke-width="0" textLength="6.34" lengthAdjust="spacingAndGlyphs" >23</text>
<text x="42.30" y="483.50" font-size="6.2" fill="#111" stroke="#111" stroke-width="0" textLength="19.33" lengthAdjust="spacingAndGlyphs" >23 days</text>
<text x="3.80" y="491.65" font-size="6.2" fill="#111" stroke="#111" stroke-width="0" textLength="6.34" lengthAdjust="spacingAndGlyphs" >24</text>
<text x="42.30" y="491.65" font-size="6.2" fill="#111" stroke="#111" stroke-width="0" textLength="19.33" lengthAdjust="spacingAndGlyphs" >24 days</text>
<text x="3.80" y="499.80" font-size="6.2" fill="#111" stroke="#111" stroke-width="0" textLength="6.34" lengthAdjust="spacingAndGlyphs" >25</text>
<text x="42.30" y="499.80" font-size="6.2" fill="#111" stroke="#111" stroke-width="0" textLength="42.63" lengthAdjust="spacingAndGlyphs" >25 days (5th Lift )</text>
<text x="3.80" y="507.95" font-size="6.2" fill="#111" stroke="#111" stroke-width="0" textLength="6.34" lengthAdjust="spacingAndGlyphs" >26</text>
<text x="42.30" y="507.95" font-size="6.2" fill="#111" stroke="#111" stroke-width="0" textLength="19.33" lengthAdjust="spacingAndGlyphs" >26 days</text>
<text x="3.80" y="516.10" font-size="6.2" fill="#111" stroke="#111" stroke-width="0" textLength="6.34" lengthAdjust="spacingAndGlyphs" >27</text>
<text x="42.30" y="516.10" font-size="6.2" fill="#111" stroke="#111" stroke-width="0" textLength="19.33" lengthAdjust="spacingAndGlyphs" >27 days</text>
<text x="3.80" y="524.25" font-size="6.2" fill="#111" stroke="#111" stroke-width="0" textLength="6.34" lengthAdjust="spacingAndGlyphs" >28</text>
<text x="42.30" y="524.25" font-size="6.2" fill="#111" stroke="#111" stroke-width="0" textLength="19.33" lengthAdjust="spacingAndGlyphs" >28 days</text>
<text x="3.80" y="532.40" font-size="6.2" fill="#111" stroke="#111" stroke-width="0" textLength="6.34" lengthAdjust="spacingAndGlyphs" >29</text>
<text x="42.30" y="532.40" font-size="6.2" fill="#111" stroke="#111" stroke-width="0" textLength="19.33" lengthAdjust="spacingAndGlyphs" >29 days</text>
<text x="3.80" y="540.55" font-size="6.2" fill="#111" stroke="#111" stroke-width="0" textLength="6.34" lengthAdjust="spacingAndGlyphs" >30</text>
<text x="42.30" y="540.55" font-size="6.2" fill="#111" stroke="#111" stroke-width="0" textLength="19.33" lengthAdjust="spacingAndGlyphs" >30 days</text>
<rect x="152.20" y="449.00" width="7.50" height="94.50" fill="#f0f0f0" />
<rect x="153.00" y="510.00" width="6.00" height="25.00" fill="#cdcdcd" />
<path d="M154.5,453.5 l1.5,-1.5 l1.5,1.5 M154.5,538.5 l1.5,1.5 l1.5,-1.5" fill="none" stroke="#555" stroke-width="0.7"/>
<line x1="162.70" y1="54.00" x2="162.70" y2="544.00" stroke="#7a7a7a" stroke-width="1" />
<line x1="162.50" y1="54.50" x2="752.50" y2="54.50" stroke="#9a9a9a" stroke-width="1" />
<rect x="744.50" y="55.00" width="8.00" height="481.00" fill="#f0f0f0" />
<path d="M746.8,60.5 l1.8,-1.8 l1.8,1.8 M746.8,530.5 l1.8,1.8 l1.8,-1.8" fill="none" stroke="#b0b0b0" stroke-width="0.6"/>
<rect x="163.20" y="536.00" width="581.30" height="7.60" fill="#f0f0f0" />
<path d="M168,538 l-1.8,1.8 l1.8,1.8 M739.5,538 l1.8,1.8 l-1.8,1.8" fill="none" stroke="#555" stroke-width="0.7"/>
<rect x="744.50" y="536.00" width="8.00" height="7.60" fill="#f0f0f0" />
<rect x="332.80" y="536.00" width="8.00" height="6.70" fill="#cdcdcd" />
<rect x="0.00" y="543.80" width="768.00" height="13.20" fill="#f0f0f0" />
<line x1="0.00" y1="544.40" x2="768.00" y2="544.40" stroke="#e2e2e2" stroke-width="0.6" stroke-dasharray="1 1"/>
<text x="424.60" y="552.60" font-size="6.2" fill="#111" stroke="#111" stroke-width="0" textLength="63.10" lengthAdjust="spacingAndGlyphs" >Go to coordinate (Ctrl+R):</text>
<rect x="489.00" y="546.00" width="71.80" height="11.00" fill="#fff" stroke="#c9d8ec" stroke-width="0.6" />
<text x="490.50" y="553.30" font-size="6.2" fill="#111" stroke="#111" stroke-width="0" textLength="54.50" lengthAdjust="spacingAndGlyphs" >5.006039, 26.714976 m</text>
<rect x="562.30" y="545.50" width="13.00" height="11.50" fill="#fbd27a" stroke="#e8b048" stroke-width="0.5" />
<path d="M565,553 h7 v2.5 h-7z" fill="#606060"/><path d="M568.5,547 v5 M566.5,549.5 l2,-2 l2,2" fill="none" stroke="#333" stroke-width="0.6"/>
<rect x="577.00" y="546.00" width="11.00" height="11.00" fill="#e6e6e6" />
<path d="M582.5,547.5 v8 M578.5,551.5 h8" stroke="#222" stroke-width="0.7"/>
<rect x="588.00" y="546.00" width="22.80" height="11.00" fill="#fff" stroke="#d0d0d0" stroke-width="0.5" />
<text x="591.00" y="553.50" font-size="6.2" fill="#202060" stroke="#202060" stroke-width="0" >1</text>
<path d="M605,550 l1.5,-1.5 l1.5,1.5 M605,553 l1.5,1.5 l1.5,-1.5" fill="none" stroke="#555" stroke-width="0.5"/>
<rect x="613.50" y="546.00" width="13.00" height="11.00" fill="#f6f6f6" />
<path d="M617,556 q-1.5,-3 -0.5,-5 v-2 q1,-0.8 1.5,0 v-1 q1,-0.8 1.5,0 v0 q1,-0.8 1.5,0 v1 q1,-0.8 1.5,0 v4 q0,2 -1.5,3z" fill="#fff" stroke="#444" stroke-width="0.5"/>
<line x1="628.50" y1="547.00" x2="628.50" y2="556.00" stroke="#d0d0d0" stroke-width="0.6" />
<circle cx="634.5" cy="550.5" r="3" fill="#eaf2fb" stroke="#333" stroke-width="0.7"/><path d="M636.5,552.5 l2.5,2.5" stroke="#333" stroke-width="1"/>
<path d="M633.0,550.5 h3" stroke="#2050a0" stroke-width="0.6"/>
<path d="M634.5,549 v3" stroke="#2050a0" stroke-width="0.6"/>
<circle cx="647.5" cy="550.5" r="3" fill="#eaf2fb" stroke="#333" stroke-width="0.7"/><path d="M649.5,552.5 l2.5,2.5" stroke="#333" stroke-width="1"/>
<path d="M646.0,550.5 h3" stroke="#2050a0" stroke-width="0.6"/>
<rect x="657.20" y="545.50" width="9.50" height="11.00" fill="#dbe8f8" stroke="#7aa0d0" stroke-width="0.5" />
<circle cx="661" cy="550.5" r="3" fill="#f0f0f0" stroke="#333" stroke-width="0.7"/><path d="M663,552.5 l2.5,2.5" stroke="#333" stroke-width="1"/><path d="M658.5,556 l2,-3 l2,3z" fill="#f0c020"/>
<text x="672.50" y="553.30" font-size="6.2" fill="#111" stroke="#111" stroke-width="0" textLength="30.50" lengthAdjust="spacingAndGlyphs" >1:151 (132%)</text>
<circle cx="708" cy="550.3" r="3.6" fill="#f8f8f8" stroke="#555" stroke-width="0.6"/><path d="M706.2,550.3 h3.6" stroke="#333" stroke-width="0.6"/>
<line x1="716.00" y1="550.50" x2="755.00" y2="550.50" stroke="#cfcfcf" stroke-width="0.8" />
<path d="M735,546.5 h3.5 v6 l-1.75,1.8 l-1.75,-1.8z" fill="#2a7ad8"/>
<circle cx="762.5" cy="550.3" r="3.6" fill="#f8f8f8" stroke="#555" stroke-width="0.6"/><path d="M760.7,550.3 h3.6 M762.5,548.5 v3.6" stroke="#333" stroke-width="0.6"/><rect x="753.80" y="55.00" width="14.20" height="318.00" fill="#fbfbfb" />
<line x1="754.00" y1="55.00" x2="754.00" y2="373.00" stroke="#e4e4e4" stroke-width="0.6" />
<line x1="756.00" y1="62.30" x2="767.00" y2="62.30" stroke="#bdbdbd" stroke-width="0.6" stroke-dasharray="1 1"/>
<rect x="754.30" y="196.30" width="13.70" height="19.80" fill="#cde5f8" />
<rect x="754.30" y="253.90" width="13.70" height="45.20" fill="#cde5f8" />
<rect x="754.30" y="333.90" width="13.70" height="39.00" fill="#cde5f8" />
<line x1="755.50" y1="74.40" x2="766.50" y2="74.40" stroke="#d0d0d0" stroke-width="0.8" />
<line x1="755.50" y1="134.20" x2="766.50" y2="134.20" stroke="#d0d0d0" stroke-width="0.8" />
<line x1="755.50" y1="164.70" x2="766.50" y2="164.70" stroke="#d0d0d0" stroke-width="0.8" />
<line x1="755.50" y1="193.40" x2="766.50" y2="193.40" stroke="#d0d0d0" stroke-width="0.8" />
<line x1="755.50" y1="249.50" x2="766.50" y2="249.50" stroke="#d0d0d0" stroke-width="0.8" />
<line x1="755.50" y1="331.40" x2="766.50" y2="331.40" stroke="#d0d0d0" stroke-width="0.8" />
<g transform="translate(0,-2.30)"><rect x="756.00" y="67.00" width="6.00" height="7.00" fill="#4a6ad8" /><path d="M756,69.5 h6 M756,72 h6 M758.5,67 v7" stroke="#b0c0f0" stroke-width="0.4"/><text x="760.5" y="75" font-size="7" font-weight="bold" font-style="italic" fill="#111">F</text><path d="M762,68.5 l3,-3" stroke="#2a50d0" stroke-width="0.9"/><path d="M764.5,67.5 l2.5,-2" stroke="#4a70e0" stroke-width="0.6"/></g>
<g transform="translate(0,13.90)"><path d="M756.5,75.5 v-6 h4 l2.5,3 h2.5 v3z" fill="#fff" stroke="#222" stroke-width="0.7"/><path d="M761,69.5 l3,-3" stroke="#2a50d0" stroke-width="0.9"/><path d="M763.5,68.5 l2.5,-2" stroke="#4a70e0" stroke-width="0.6"/></g>
<g transform="translate(0,26.80)"><path d="M756.5,75.5 v-6 h4 l2.5,3 h2.5 v3z" fill="#fff" stroke="#222" stroke-width="0.7"/><text x="756.5" y="75" font-size="5" font-weight="bold" fill="#e02020">M</text><path d="M761,69.5 l3,-3" stroke="#2a50d0" stroke-width="0.9"/><path d="M763.5,68.5 l2.5,-2" stroke="#4a70e0" stroke-width="0.6"/></g>
<g transform="translate(0,37.30)"><circle cx="759.5" cy="73.5" r="1.3" fill="#111"/><path d="M761,70 l3,-3" stroke="#2a50d0" stroke-width="0.9"/><path d="M763.5,69 l2.5,-2" stroke="#4a70e0" stroke-width="0.6"/></g>
<g transform="translate(0,48.60)"><circle cx="759.5" cy="74" r="1.3" fill="#111"/><text x="761.5" y="73.5" font-size="4.8" fill="#e02020">12</text><path d="M756.5,70.5 l3,-3" stroke="#2a50d0" stroke-width="0.9"/><path d="M759.0,69.5 l2.5,-2" stroke="#4a70e0" stroke-width="0.6"/></g>
<g transform="translate(0,73.50)"><path d="M756.5,76 v-5 h9 v5 M756.5,73.5 h9 M759.5,71 v5 M762.5,71 v5" fill="none" stroke="#aaa" stroke-width="0.5"/><path d="M761,69.5 l3,-3" stroke="#2a50d0" stroke-width="0.9"/><path d="M763.5,68.5 l2.5,-2" stroke="#4a70e0" stroke-width="0.6"/></g>
<g transform="translate(0,85.80)"><path d="M756.5,71.5 h9 v5 h-9z M756.5,74 h9 M759.5,71.5 v5 M762.5,71.5 v5" fill="#eaf6ea" stroke="#444" stroke-width="0.5"/><path d="M761,70 l3,-3" stroke="#2a50d0" stroke-width="0.9"/><path d="M763.5,69 l2.5,-2" stroke="#4a70e0" stroke-width="0.6"/></g>
<g transform="translate(0,100.60)"><rect x="756.50" y="66.50" width="9.00" height="9.00" fill="#f2f070" stroke="#555" stroke-width="0.5" /><rect x="756.50" y="72.50" width="9.00" height="3.00" fill="#6ac04a" /><path d="M761,69.5 l3,-3" stroke="#2a50d0" stroke-width="0.9"/><path d="M763.5,68.5 l2.5,-2" stroke="#4a70e0" stroke-width="0.6"/></g>
<g transform="translate(0,114.50)"><circle cx="757.5" cy="73.5" r="1.6" fill="#e03030"/><circle cx="764.5" cy="73.5" r="1.6" fill="#2050d0"/><path d="M757.5,73.5 h7" stroke="#333" stroke-width="0.6"/><path d="M761,69.5 l3,-3" stroke="#2a50d0" stroke-width="0.9"/><path d="M763.5,68.5 l2.5,-2" stroke="#4a70e0" stroke-width="0.6"/></g>
<g transform="translate(0,130.30)"><rect x="757.00" y="66.50" width="2.80" height="9.00" fill="#d83020" stroke="#222" stroke-width="0.5" /><path d="M761,69.5 l3,-3" stroke="#2a50d0" stroke-width="0.9"/><path d="M763.5,68.5 l2.5,-2" stroke="#4a70e0" stroke-width="0.6"/></g>
<g transform="translate(0,142.10)"><path d="M756.5,75.5 l4.5,-4 l4.5,4z" fill="none" stroke="#333" stroke-width="0.6"/><path d="M757,74.5 h8" stroke="#333" stroke-width="0.5" stroke-dasharray="0.8 0.6"/><path d="M761,69.5 l3,-3" stroke="#2a50d0" stroke-width="0.9"/><path d="M763.5,68.5 l2.5,-2" stroke="#4a70e0" stroke-width="0.6"/></g>
<g transform="translate(0,156.00)"><rect x="756.50" y="66.50" width="9.00" height="9.00" fill="#fff" stroke="#333" stroke-width="0.6" /><path d="M756.5,69 h9 M756.5,72 h9 M759.5,66.5 v2.5 M762,69 v3 M759.5,72 v3.5" stroke="#333" stroke-width="0.6"/><path d="M761,69 l3,-3" stroke="#2a50d0" stroke-width="0.9"/><path d="M763.5,68 l2.5,-2" stroke="#4a70e0" stroke-width="0.6"/></g>
<g transform="translate(0,169.80)"><path d="M758,70 l3,3 l3,-3 M761,67 v6" fill="none" stroke="#6a8ae0" stroke-width="0.8"/><path d="M757,76 h8" stroke="#aac0f0" stroke-width="0.6"/></g>
<g transform="translate(0,189.30)"><path d="M757,76 l1,-5 l3,-1 l2.5,3 l-1,3z" fill="#fff" stroke="#333" stroke-width="0.5"/><circle cx="762.5" cy="74" r="1.8" fill="#e0d020" stroke="#444" stroke-width="0.4"/><path d="M759.5,69.5 l3,-3" stroke="#2a50d0" stroke-width="0.9"/><path d="M762.0,68.5 l2.5,-2" stroke="#4a70e0" stroke-width="0.6"/></g>
<g transform="translate(0,199.80)"><path d="M756.5,76 q1,-5 2,-5 q1,0 1.5,5 q1,-5 2,-5 q1,0 1.5,5 q1,-5 2,-5" fill="none" stroke="#333" stroke-width="0.6"/><path d="M756.5,76 h9" stroke="#333" stroke-width="0.6"/><path d="M759.5,69.5 l3,-3" stroke="#2a50d0" stroke-width="0.9"/><path d="M762.0,68.5 l2.5,-2" stroke="#4a70e0" stroke-width="0.6"/></g>
<g transform="translate(0,212.00)"><path d="M756.5,76 v-4 l2,-2 h7 v6z" fill="#1a90e0"/><path d="M758,69.5 h5" stroke="#2040a0" stroke-width="1"/></g>
<g transform="translate(0,223.30)"><rect x="756.50" y="67.00" width="9.00" height="8.50" fill="#fff" stroke="#444" stroke-width="0.5" /><path d="M756.5,69.5 h9 M756.5,72.5 h9 M759.5,67 v8.5 M762.5,67 v8.5" stroke="#e04040" stroke-width="0.5"/><path d="M761,69 l3,-3" stroke="#2a50d0" stroke-width="0.9"/><path d="M763.5,68 l2.5,-2" stroke="#4a70e0" stroke-width="0.6"/></g>
<g transform="translate(0,235.40)"><rect x="756.50" y="67.00" width="9.00" height="8.50" fill="#f0a030" stroke="#444" stroke-width="0.5" /><path d="M756.5,69.5 h9 M756.5,72.5 h9 M759.5,67 v8.5 M762.5,67 v8.5" stroke="#e05020" stroke-width="0.5"/><path d="M761,69 l3,-3" stroke="#2a50d0" stroke-width="0.9"/><path d="M763.5,68 l2.5,-2" stroke="#4a70e0" stroke-width="0.6"/></g>
<g transform="translate(0,247.50)"><rect x="756.50" y="67.00" width="9.00" height="9.00" fill="#fff" stroke="#555" stroke-width="0.5" /><rect x="757.00" y="67.50" width="2.50" height="8.00" fill="#f0e060" /><path d="M761,69 l3,-3" stroke="#2a50d0" stroke-width="0.9"/><path d="M763.5,68 l2.5,-2" stroke="#4a70e0" stroke-width="0.6"/></g>
<g transform="translate(0,269.80)"><path d="M757,75 q0,-5 3,-5 q3,0 4,5z" fill="#ddd" stroke="#333" stroke-width="0.6"/><path d="M760,67.5 l4,7" stroke="#333" stroke-width="0.7"/><path d="M759,69.5 l3,-3" stroke="#2a50d0" stroke-width="0.9"/><path d="M761.5,68.5 l2.5,-2" stroke="#4a70e0" stroke-width="0.6"/></g>
<g transform="translate(0,282.60)"><path d="M757,67 v8.5 h9 M757,75.5 v-1.5 M760,75.5 v-1.5 M763,75.5 v-1.5" fill="none" stroke="#444" stroke-width="0.6"/><path d="M760,70 l3,-3" stroke="#2a50d0" stroke-width="0.9"/><path d="M762.5,69 l2.5,-2" stroke="#4a70e0" stroke-width="0.6"/></g>
<g transform="translate(0,295.50)"><rect x="756.50" y="67.00" width="9.00" height="8.50" fill="#222" /><rect x="757.50" y="69.50" width="7.00" height="5.00" fill="#3aa050" /><path d="M761,69 l3,-3" stroke="#2a50d0" stroke-width="0.9"/><path d="M763.5,68 l2.5,-2" stroke="#4a70e0" stroke-width="0.6"/></g>
<rect x="230.30" y="350.40" width="480.00" height="96.00" fill="#80bcfa"/>
<path d="M594.38,446.40 L594.34,444.39 L594.21,442.45 L594.01,440.53 L593.72,438.64 L593.35,436.75 L592.89,434.88 L592.36,433.02 L591.74,431.18 L591.03,429.34 L590.25,427.52 L589.38,425.71 L588.43,423.91 L587.39,422.12 L586.28,420.34 L585.07,418.58 L583.79,416.83 L582.42,415.09 L580.97,413.37 L579.43,411.66 L577.81,409.97 L576.11,408.29 L574.32,406.63 L572.44,404.98 L570.48,403.36 L568.44,401.75 L566.31,400.16 L564.09,398.59 L561.79,397.03 L559.40,395.50 L556.92,393.99 L554.36,392.49 L551.71,391.02 L548.96,389.57 L546.13,388.15 L543.21,386.74 L540.20,385.36 L537.10,384.01 L533.90,382.67 L530.62,381.36 L527.23,380.08 L523.76,378.82 L520.18,377.59 L516.51,376.39 L512.74,375.21 L508.87,374.06 L504.90,372.93 L500.82,371.84 L496.64,370.77 L492.36,369.73 L487.96,368.72 L483.45,367.75 L478.82,366.80 L474.08,365.88 L469.21,364.99 L464.22,364.13 L459.10,363.30 L453.85,362.51 L448.45,361.74 L442.91,361.01 L437.22,360.31 L431.37,359.65 L425.35,359.01 L419.16,358.41 L412.77,357.84 L406.18,357.31 L399.37,356.81 L392.32,356.34 L385.02,355.91 L377.43,355.51 L369.52,355.14 L361.24,354.81 L352.56,354.52 L343.39,354.26 L333.63,354.03 L323.16,353.84 L311.77,353.68 L299.10,353.56 L284.51,353.47 L266.36,353.42 L230.30,353.40 L230.30,446.40 Z" fill="#80d8fa"/>
<path d="M528.50,446.40 L528.47,444.08 L528.37,441.98 L528.20,439.96 L527.97,437.99 L527.68,436.05 L527.32,434.15 L526.89,432.27 L526.40,430.42 L525.84,428.59 L525.21,426.77 L524.52,424.98 L523.76,423.21 L522.94,421.45 L522.05,419.71 L521.09,418.00 L520.07,416.29 L518.98,414.61 L517.82,412.95 L516.60,411.30 L515.31,409.67 L513.95,408.06 L512.53,406.47 L511.03,404.89 L509.47,403.34 L507.84,401.81 L506.14,400.29 L504.37,398.80 L502.54,397.33 L500.63,395.88 L498.65,394.44 L496.61,393.04 L494.49,391.65 L492.30,390.28 L490.04,388.94 L487.70,387.62 L485.30,386.32 L482.82,385.05 L480.26,383.80 L477.63,382.58 L474.92,381.38 L472.14,380.20 L469.28,379.05 L466.34,377.93 L463.32,376.83 L460.22,375.76 L457.03,374.71 L453.76,373.69 L450.41,372.70 L446.96,371.74 L443.43,370.80 L439.80,369.89 L436.08,369.01 L432.27,368.16 L428.35,367.34 L424.33,366.54 L420.20,365.78 L415.97,365.04 L411.61,364.34 L407.14,363.66 L402.54,363.01 L397.81,362.40 L392.93,361.81 L387.91,361.26 L382.73,360.73 L377.38,360.24 L371.84,359.78 L366.11,359.35 L360.16,358.95 L353.96,358.58 L347.50,358.25 L340.73,357.94 L333.61,357.67 L326.07,357.43 L318.04,357.22 L309.39,357.04 L299.94,356.90 L289.40,356.78 L277.19,356.70 L261.86,356.66 L230.30,356.64 L230.30,446.40 Z" fill="#80fafa"/>
<path d="M491.90,446.40 L491.87,443.79 L491.80,441.56 L491.67,439.46 L491.49,437.44 L491.25,435.48 L490.97,433.57 L490.63,431.70 L490.24,429.86 L489.80,428.05 L489.31,426.27 L488.77,424.52 L488.17,422.79 L487.52,421.09 L486.82,419.40 L486.06,417.74 L485.25,416.11 L484.39,414.49 L483.48,412.89 L482.51,411.32 L481.49,409.77 L480.42,408.23 L479.29,406.72 L478.10,405.23 L476.87,403.76 L475.57,402.31 L474.23,400.88 L472.82,399.47 L471.36,398.08 L469.85,396.72 L468.28,395.37 L466.65,394.05 L464.96,392.75 L463.21,391.47 L461.41,390.22 L459.54,388.99 L457.62,387.78 L455.63,386.59 L453.59,385.43 L451.48,384.29 L449.30,383.17 L447.07,382.08 L444.76,381.01 L442.39,379.97 L439.96,378.95 L437.45,377.96 L434.87,376.99 L432.22,376.05 L429.50,375.13 L426.70,374.24 L423.82,373.38 L420.87,372.54 L417.83,371.73 L414.70,370.94 L411.49,370.18 L408.19,369.45 L404.79,368.75 L401.29,368.07 L397.69,367.42 L393.98,366.80 L390.15,366.21 L386.20,365.64 L382.12,365.10 L377.91,364.59 L373.55,364.11 L369.03,363.66 L364.33,363.24 L359.45,362.84 L354.36,362.48 L349.04,362.14 L343.45,361.83 L337.57,361.55 L331.34,361.30 L324.70,361.08 L317.56,360.89 L309.80,360.73 L301.22,360.60 L291.51,360.49 L280.03,360.42 L265.15,360.37 L230.30,360.36 L230.30,446.40 Z" fill="#80ffd2"/>
<path d="M463.70,446.40 L463.68,443.48 L463.62,441.13 L463.51,438.96 L463.37,436.90 L463.18,434.91 L462.95,432.99 L462.67,431.12 L462.36,429.30 L462.00,427.52 L461.60,425.76 L461.16,424.05 L460.68,422.36 L460.15,420.70 L459.58,419.07 L458.97,417.46 L458.32,415.88 L457.62,414.32 L456.88,412.79 L456.09,411.28 L455.26,409.79 L454.39,408.32 L453.47,406.88 L452.51,405.46 L451.50,404.06 L450.45,402.68 L449.35,401.32 L448.21,399.99 L447.02,398.68 L445.78,397.39 L444.50,396.12 L443.17,394.87 L441.79,393.65 L440.36,392.44 L438.89,391.26 L437.36,390.11 L435.78,388.97 L434.15,387.86 L432.47,386.77 L430.74,385.70 L428.95,384.66 L427.11,383.64 L425.21,382.64 L423.26,381.67 L421.25,380.72 L419.18,379.80 L417.04,378.90 L414.85,378.02 L412.59,377.17 L410.26,376.34 L407.87,375.53 L405.41,374.75 L402.87,374.00 L400.27,373.27 L397.58,372.57 L394.81,371.89 L391.95,371.24 L389.01,370.61 L385.98,370.01 L382.84,369.43 L379.60,368.88 L376.26,368.36 L372.79,367.86 L369.20,367.39 L365.47,366.95 L361.60,366.53 L357.56,366.14 L353.35,365.77 L348.94,365.43 L344.31,365.12 L339.44,364.84 L334.28,364.58 L328.79,364.35 L322.90,364.15 L316.52,363.97 L309.54,363.82 L301.75,363.70 L292.81,363.60 L282.08,363.53 L267.81,363.49 L230.30,363.48 L230.30,446.40 Z" fill="#80ffb0"/>
<path d="M441.50,446.40 L441.48,443.39 L441.42,441.03 L441.33,438.88 L441.20,436.85 L441.03,434.90 L440.82,433.02 L440.57,431.20 L440.29,429.42 L439.96,427.68 L439.60,425.99 L439.20,424.33 L438.77,422.70 L438.29,421.09 L437.77,419.52 L437.22,417.97 L436.63,416.45 L436.00,414.96 L435.32,413.49 L434.61,412.04 L433.86,410.61 L433.07,409.21 L432.24,407.83 L431.37,406.47 L430.46,405.14 L429.51,403.82 L428.52,402.53 L427.48,401.26 L426.41,400.01 L425.29,398.78 L424.13,397.58 L422.92,396.39 L421.67,395.23 L420.38,394.09 L419.05,392.97 L417.66,391.87 L416.24,390.79 L414.76,389.74 L413.24,388.71 L411.67,387.70 L410.06,386.71 L408.39,385.74 L406.67,384.80 L404.91,383.88 L403.08,382.98 L401.21,382.11 L399.28,381.25 L397.29,380.43 L395.25,379.62 L393.15,378.84 L390.98,378.08 L388.75,377.34 L386.46,376.63 L384.10,375.94 L381.67,375.28 L379.16,374.64 L376.58,374.03 L373.92,373.43 L371.17,372.87 L368.33,372.33 L365.40,371.81 L362.37,371.31 L359.24,370.85 L355.99,370.40 L352.61,369.98 L349.11,369.59 L345.46,369.22 L341.64,368.88 L337.66,368.56 L333.47,368.27 L329.06,368.00 L324.39,367.76 L319.42,367.54 L314.09,367.35 L308.32,367.18 L302.00,367.04 L294.95,366.92 L286.87,366.84 L277.15,366.77 L264.24,366.73 L230.30,366.72 L230.30,446.40 Z" fill="#80ff90"/>
<path d="M423.50,446.40 L423.48,443.32 L423.43,440.98 L423.34,438.85 L423.22,436.86 L423.06,434.96 L422.86,433.13 L422.63,431.36 L422.36,429.64 L422.06,427.97 L421.72,426.33 L421.35,424.73 L420.94,423.16 L420.49,421.63 L420.01,420.12 L419.49,418.64 L418.94,417.18 L418.35,415.76 L417.72,414.35 L417.05,412.97 L416.35,411.61 L415.61,410.28 L414.84,408.97 L414.02,407.68 L413.17,406.41 L412.28,405.16 L411.35,403.93 L410.38,402.73 L409.38,401.54 L408.33,400.38 L407.25,399.24 L406.12,398.12 L404.95,397.02 L403.75,395.94 L402.50,394.88 L401.21,393.84 L399.88,392.83 L398.50,391.83 L397.08,390.86 L395.62,389.91 L394.11,388.98 L392.55,388.07 L390.95,387.18 L389.30,386.31 L387.61,385.47 L385.86,384.64 L384.06,383.84 L382.21,383.06 L380.31,382.31 L378.35,381.57 L376.33,380.86 L374.26,380.17 L372.13,379.50 L369.93,378.85 L367.67,378.23 L365.34,377.63 L362.95,377.05 L360.48,376.50 L357.93,375.96 L355.30,375.45 L352.58,374.97 L349.77,374.51 L346.87,374.07 L343.86,373.65 L340.74,373.26 L337.50,372.89 L334.13,372.54 L330.61,372.22 L326.94,371.92 L323.08,371.65 L319.02,371.40 L314.73,371.17 L310.16,370.97 L305.28,370.79 L300.00,370.63 L294.23,370.50 L287.80,370.39 L280.45,370.31 L271.65,370.25 L260.03,370.21 L230.30,370.20 L230.30,446.40 Z" fill="#90ff80"/>
<path d="M405.14,446.40 L405.12,443.47 L405.07,441.23 L404.99,439.21 L404.87,437.31 L404.72,435.50 L404.53,433.76 L404.31,432.07 L404.06,430.43 L403.77,428.84 L403.45,427.28 L403.10,425.75 L402.71,424.26 L402.28,422.80 L401.83,421.36 L401.33,419.95 L400.81,418.56 L400.25,417.20 L399.65,415.87 L399.02,414.55 L398.35,413.26 L397.65,411.98 L396.92,410.73 L396.14,409.50 L395.34,408.30 L394.49,407.11 L393.61,405.94 L392.70,404.79 L391.74,403.66 L390.75,402.56 L389.73,401.47 L388.66,400.40 L387.56,399.35 L386.42,398.32 L385.24,397.32 L384.02,396.33 L382.76,395.36 L381.46,394.41 L380.12,393.48 L378.74,392.58 L377.32,391.69 L375.86,390.82 L374.35,389.98 L372.80,389.15 L371.20,388.35 L369.56,387.56 L367.87,386.80 L366.13,386.06 L364.34,385.33 L362.51,384.63 L360.62,383.95 L358.68,383.30 L356.68,382.66 L354.63,382.04 L352.52,381.45 L350.34,380.88 L348.11,380.33 L345.80,379.80 L343.43,379.29 L340.98,378.81 L338.46,378.34 L335.85,377.90 L333.16,377.48 L330.38,377.09 L327.49,376.71 L324.50,376.36 L321.39,376.03 L318.15,375.73 L314.78,375.44 L311.24,375.18 L307.53,374.94 L303.61,374.72 L299.45,374.53 L295.02,374.36 L290.24,374.21 L285.04,374.09 L279.27,373.98 L272.72,373.90 L264.94,373.85 L254.80,373.81 L230.30,373.80 L230.30,446.40 Z" fill="#b0ff80"/>
<path d="M386.90,446.40 L386.88,443.79 L386.84,441.75 L386.76,439.89 L386.65,438.13 L386.50,436.44 L386.33,434.81 L386.12,433.23 L385.88,431.70 L385.61,430.19 L385.31,428.72 L384.97,427.28 L384.61,425.87 L384.21,424.49 L383.78,423.12 L383.31,421.78 L382.82,420.47 L382.29,419.17 L381.73,417.90 L381.14,416.64 L380.51,415.41 L379.85,414.20 L379.16,413.00 L378.43,411.83 L377.67,410.67 L376.88,409.53 L376.05,408.41 L375.19,407.31 L374.30,406.23 L373.37,405.17 L372.40,404.12 L371.41,403.09 L370.37,402.09 L369.30,401.10 L368.20,400.13 L367.05,399.18 L365.88,398.25 L364.66,397.33 L363.41,396.44 L362.12,395.56 L360.79,394.71 L359.42,393.87 L358.01,393.06 L356.56,392.26 L355.08,391.48 L353.55,390.72 L351.97,389.99 L350.35,389.27 L348.69,388.57 L346.99,387.89 L345.23,387.24 L343.43,386.60 L341.58,385.98 L339.68,385.39 L337.72,384.81 L335.71,384.26 L333.65,383.73 L331.52,383.21 L329.33,382.72 L327.08,382.25 L324.76,381.81 L322.36,381.38 L319.89,380.97 L317.34,380.59 L314.70,380.23 L311.97,379.88 L309.14,379.57 L306.19,379.27 L303.12,378.99 L299.92,378.74 L296.56,378.51 L293.02,378.30 L289.29,378.11 L285.31,377.94 L281.05,377.80 L276.42,377.68 L271.32,377.58 L265.57,377.50 L258.79,377.44 L250.09,377.41 L230.30,377.40 L230.30,446.40 Z" fill="#d8ff80"/>
<path d="M368.90,446.40 L368.88,444.10 L368.84,442.26 L368.76,440.55 L368.66,438.93 L368.52,437.37 L368.35,435.86 L368.15,434.40 L367.92,432.96 L367.66,431.56 L367.37,430.18 L367.05,428.83 L366.70,427.51 L366.32,426.20 L365.90,424.92 L365.46,423.66 L364.98,422.42 L364.48,421.19 L363.94,419.99 L363.37,418.80 L362.77,417.63 L362.14,416.48 L361.48,415.34 L360.78,414.23 L360.05,413.13 L359.30,412.04 L358.51,410.98 L357.69,409.93 L356.83,408.90 L355.95,407.88 L355.03,406.89 L354.08,405.91 L353.09,404.95 L352.07,404.00 L351.02,403.07 L349.94,402.16 L348.82,401.27 L347.67,400.40 L346.48,399.54 L345.26,398.70 L344.00,397.88 L342.70,397.08 L341.37,396.30 L340.01,395.53 L338.60,394.79 L337.16,394.06 L335.68,393.35 L334.16,392.66 L332.60,391.99 L331.00,391.34 L329.36,390.71 L327.68,390.10 L325.95,389.51 L324.17,388.93 L322.35,388.38 L320.48,387.85 L318.57,387.34 L316.60,386.84 L314.57,386.37 L312.49,385.92 L310.35,385.49 L308.15,385.07 L305.89,384.68 L303.56,384.31 L301.15,383.96 L298.66,383.64 L296.09,383.33 L293.42,383.04 L290.66,382.78 L287.78,382.53 L284.77,382.31 L281.63,382.10 L278.32,381.92 L274.81,381.76 L271.08,381.62 L267.06,381.51 L262.67,381.41 L257.77,381.34 L252.09,381.28 L244.97,381.25 L230.30,381.24 L230.30,446.40 Z" fill="#faff80"/>
<path d="M351.02,446.40 L351.01,444.44 L350.96,442.83 L350.89,441.32 L350.79,439.88 L350.66,438.49 L350.50,437.13 L350.31,435.81 L350.09,434.52 L349.84,433.25 L349.56,432.00 L349.26,430.77 L348.92,429.57 L348.56,428.38 L348.17,427.21 L347.74,426.06 L347.29,424.92 L346.81,423.80 L346.30,422.69 L345.76,421.60 L345.19,420.53 L344.59,419.47 L343.96,418.43 L343.31,417.40 L342.62,416.39 L341.90,415.39 L341.16,414.41 L340.38,413.44 L339.57,412.48 L338.73,411.55 L337.87,410.63 L336.97,409.72 L336.04,408.83 L335.09,407.95 L334.10,407.09 L333.08,406.25 L332.03,405.42 L330.94,404.61 L329.83,403.82 L328.69,403.04 L327.51,402.28 L326.30,401.53 L325.06,400.80 L323.78,400.09 L322.48,399.40 L321.14,398.72 L319.76,398.06 L318.35,397.42 L316.90,396.80 L315.42,396.19 L313.91,395.60 L312.35,395.03 L310.76,394.48 L309.13,393.95 L307.46,393.43 L305.75,392.93 L303.99,392.45 L302.20,391.99 L300.36,391.55 L298.47,391.13 L296.53,390.73 L294.54,390.34 L292.50,389.98 L290.40,389.63 L288.25,389.31 L286.02,389.00 L283.74,388.71 L281.37,388.44 L278.93,388.20 L276.40,387.97 L273.77,387.76 L271.03,387.57 L268.16,387.40 L265.15,387.25 L261.97,387.12 L258.57,387.01 L254.90,386.92 L250.86,386.85 L246.26,386.80 L240.65,386.77 L230.30,386.76 L230.30,446.40 Z" fill="#ffe080"/>
<path d="M333.50,446.40 L333.49,444.89 L333.44,443.56 L333.37,442.30 L333.27,441.07 L333.14,439.88 L332.99,438.71 L332.80,437.56 L332.59,436.42 L332.35,435.31 L332.08,434.20 L331.78,433.12 L331.46,432.04 L331.10,430.98 L330.72,429.93 L330.31,428.90 L329.87,427.87 L329.40,426.86 L328.90,425.86 L328.38,424.88 L327.83,423.90 L327.25,422.94 L326.64,421.98 L326.00,421.05 L325.33,420.12 L324.64,419.20 L323.92,418.30 L323.17,417.41 L322.39,416.54 L321.59,415.67 L320.75,414.82 L319.89,413.99 L319.00,413.16 L318.08,412.35 L317.14,411.56 L316.16,410.78 L315.16,410.01 L314.13,409.25 L313.07,408.52 L311.98,407.79 L310.87,407.08 L309.72,406.39 L308.55,405.71 L307.35,405.04 L306.12,404.40 L304.86,403.76 L303.57,403.15 L302.25,402.55 L300.91,401.96 L299.53,401.39 L298.12,400.84 L296.68,400.31 L295.21,399.79 L293.71,399.29 L292.18,398.80 L290.61,398.34 L289.01,397.89 L287.38,397.45 L285.71,397.04 L284.01,396.64 L282.26,396.26 L280.49,395.90 L278.67,395.56 L276.81,395.23 L274.90,394.92 L272.96,394.63 L270.96,394.36 L268.91,394.11 L266.81,393.88 L264.64,393.66 L262.41,393.46 L260.11,393.28 L257.73,393.12 L255.25,392.98 L252.66,392.86 L249.94,392.76 L247.05,392.67 L243.95,392.60 L240.52,392.56 L236.53,392.53 L230.30,392.52 L230.30,446.40 Z" fill="#ffbc80"/>
<path d="M313.10,446.40 L313.09,445.31 L313.05,444.30 L312.98,443.31 L312.89,442.34 L312.77,441.38 L312.62,440.43 L312.45,439.50 L312.25,438.57 L312.02,437.65 L311.77,436.73 L311.49,435.83 L311.19,434.93 L310.86,434.04 L310.50,433.16 L310.12,432.29 L309.71,431.42 L309.27,430.56 L308.81,429.71 L308.33,428.87 L307.81,428.04 L307.28,427.21 L306.71,426.40 L306.12,425.59 L305.51,424.79 L304.87,424.00 L304.20,423.22 L303.51,422.46 L302.80,421.70 L302.06,420.95 L301.30,420.21 L300.51,419.48 L299.70,418.77 L298.86,418.06 L298.00,417.37 L297.11,416.68 L296.20,416.01 L295.27,415.35 L294.31,414.70 L293.33,414.07 L292.33,413.45 L291.30,412.84 L290.25,412.24 L289.18,411.66 L288.09,411.09 L286.97,410.53 L285.83,409.98 L284.66,409.45 L283.48,408.94 L282.27,408.44 L281.04,407.95 L279.78,407.48 L278.51,407.02 L277.21,406.57 L275.89,406.14 L274.54,405.73 L273.18,405.33 L271.79,404.95 L270.38,404.58 L268.94,404.23 L267.49,403.89 L266.01,403.57 L264.50,403.26 L262.97,402.97 L261.42,402.70 L259.84,402.44 L258.23,402.20 L256.60,401.98 L254.93,401.77 L253.24,401.57 L251.51,401.40 L249.75,401.24 L247.95,401.10 L246.10,400.97 L244.21,400.86 L242.25,400.77 L240.23,400.69 L238.12,400.64 L235.88,400.59 L233.43,400.57 L230.30,400.56 L230.30,446.40 Z" fill="#ff9c80"/>
<path d="M286.22,446.40 L286.21,445.66 L286.18,444.95 L286.12,444.24 L286.05,443.54 L285.95,442.85 L285.83,442.16 L285.69,441.48 L285.53,440.80 L285.35,440.13 L285.15,439.46 L284.92,438.79 L284.67,438.13 L284.41,437.47 L284.12,436.82 L283.81,436.17 L283.48,435.52 L283.13,434.89 L282.76,434.25 L282.37,433.62 L281.96,433.00 L281.53,432.39 L281.08,431.77 L280.61,431.17 L280.13,430.57 L279.62,429.98 L279.09,429.39 L278.54,428.82 L277.98,428.25 L277.40,427.68 L276.80,427.13 L276.18,426.58 L275.54,426.04 L274.89,425.50 L274.21,424.98 L273.53,424.46 L272.82,423.95 L272.10,423.45 L271.36,422.96 L270.61,422.48 L269.84,422.01 L269.06,421.55 L268.26,421.10 L267.44,420.65 L266.62,420.22 L265.78,419.80 L264.92,419.38 L264.05,418.98 L263.17,418.59 L262.27,418.21 L261.37,417.84 L260.45,417.48 L259.52,417.13 L258.58,416.79 L257.62,416.46 L256.66,416.15 L255.69,415.84 L254.70,415.55 L253.71,415.27 L252.71,415.00 L251.70,414.74 L250.68,414.50 L249.65,414.26 L248.62,414.04 L247.58,413.83 L246.53,413.64 L245.48,413.45 L244.42,413.28 L243.35,413.12 L242.28,412.98 L241.21,412.84 L240.13,412.72 L239.05,412.61 L237.96,412.51 L236.87,412.43 L235.78,412.36 L234.69,412.30 L233.59,412.26 L232.50,412.23 L231.40,412.21 L230.30,412.20 L230.30,446.40 Z" fill="#ff8080"/>
<path d="M594.38,446.40 L594.34,444.39 L594.21,442.45 L594.01,440.53 L593.72,438.64 L593.35,436.75 L592.89,434.88 L592.36,433.02 L591.74,431.18 L591.03,429.34 L590.25,427.52 L589.38,425.71 L588.43,423.91 L587.39,422.12 L586.28,420.34 L585.07,418.58 L583.79,416.83 L582.42,415.09 L580.97,413.37 L579.43,411.66 L577.81,409.97 L576.11,408.29 L574.32,406.63 L572.44,404.98 L570.48,403.36 L568.44,401.75 L566.31,400.16 L564.09,398.59 L561.79,397.03 L559.40,395.50 L556.92,393.99 L554.36,392.49 L551.71,391.02 L548.96,389.57 L546.13,388.15 L543.21,386.74 L540.20,385.36 L537.10,384.01 L533.90,382.67 L530.62,381.36 L527.23,380.08 L523.76,378.82 L520.18,377.59 L516.51,376.39 L512.74,375.21 L508.87,374.06 L504.90,372.93 L500.82,371.84 L496.64,370.77 L492.36,369.73 L487.96,368.72 L483.45,367.75 L478.82,366.80 L474.08,365.88 L469.21,364.99 L464.22,364.13 L459.10,363.30 L453.85,362.51 L448.45,361.74 L442.91,361.01 L437.22,360.31 L431.37,359.65 L425.35,359.01 L419.16,358.41 L412.77,357.84 L406.18,357.31 L399.37,356.81 L392.32,356.34 L385.02,355.91 L377.43,355.51 L369.52,355.14 L361.24,354.81 L352.56,354.52 L343.39,354.26 L333.63,354.03 L323.16,353.84 L311.77,353.68 L299.10,353.56 L284.51,353.47 L266.36,353.42 L230.30,353.40" fill="none" stroke="#3a3a3a" stroke-width="0.8"/>
<path d="M528.50,446.40 L528.47,444.08 L528.37,441.98 L528.20,439.96 L527.97,437.99 L527.68,436.05 L527.32,434.15 L526.89,432.27 L526.40,430.42 L525.84,428.59 L525.21,426.77 L524.52,424.98 L523.76,423.21 L522.94,421.45 L522.05,419.71 L521.09,418.00 L520.07,416.29 L518.98,414.61 L517.82,412.95 L516.60,411.30 L515.31,409.67 L513.95,408.06 L512.53,406.47 L511.03,404.89 L509.47,403.34 L507.84,401.81 L506.14,400.29 L504.37,398.80 L502.54,397.33 L500.63,395.88 L498.65,394.44 L496.61,393.04 L494.49,391.65 L492.30,390.28 L490.04,388.94 L487.70,387.62 L485.30,386.32 L482.82,385.05 L480.26,383.80 L477.63,382.58 L474.92,381.38 L472.14,380.20 L469.28,379.05 L466.34,377.93 L463.32,376.83 L460.22,375.76 L457.03,374.71 L453.76,373.69 L450.41,372.70 L446.96,371.74 L443.43,370.80 L439.80,369.89 L436.08,369.01 L432.27,368.16 L428.35,367.34 L424.33,366.54 L420.20,365.78 L415.97,365.04 L411.61,364.34 L407.14,363.66 L402.54,363.01 L397.81,362.40 L392.93,361.81 L387.91,361.26 L382.73,360.73 L377.38,360.24 L371.84,359.78 L366.11,359.35 L360.16,358.95 L353.96,358.58 L347.50,358.25 L340.73,357.94 L333.61,357.67 L326.07,357.43 L318.04,357.22 L309.39,357.04 L299.94,356.90 L289.40,356.78 L277.19,356.70 L261.86,356.66 L230.30,356.64" fill="none" stroke="#3a3a3a" stroke-width="0.8"/>
<path d="M491.90,446.40 L491.87,443.79 L491.80,441.56 L491.67,439.46 L491.49,437.44 L491.25,435.48 L490.97,433.57 L490.63,431.70 L490.24,429.86 L489.80,428.05 L489.31,426.27 L488.77,424.52 L488.17,422.79 L487.52,421.09 L486.82,419.40 L486.06,417.74 L485.25,416.11 L484.39,414.49 L483.48,412.89 L482.51,411.32 L481.49,409.77 L480.42,408.23 L479.29,406.72 L478.10,405.23 L476.87,403.76 L475.57,402.31 L474.23,400.88 L472.82,399.47 L471.36,398.08 L469.85,396.72 L468.28,395.37 L466.65,394.05 L464.96,392.75 L463.21,391.47 L461.41,390.22 L459.54,388.99 L457.62,387.78 L455.63,386.59 L453.59,385.43 L451.48,384.29 L449.30,383.17 L447.07,382.08 L444.76,381.01 L442.39,379.97 L439.96,378.95 L437.45,377.96 L434.87,376.99 L432.22,376.05 L429.50,375.13 L426.70,374.24 L423.82,373.38 L420.87,372.54 L417.83,371.73 L414.70,370.94 L411.49,370.18 L408.19,369.45 L404.79,368.75 L401.29,368.07 L397.69,367.42 L393.98,366.80 L390.15,366.21 L386.20,365.64 L382.12,365.10 L377.91,364.59 L373.55,364.11 L369.03,363.66 L364.33,363.24 L359.45,362.84 L354.36,362.48 L349.04,362.14 L343.45,361.83 L337.57,361.55 L331.34,361.30 L324.70,361.08 L317.56,360.89 L309.80,360.73 L301.22,360.60 L291.51,360.49 L280.03,360.42 L265.15,360.37 L230.30,360.36" fill="none" stroke="#3a3a3a" stroke-width="0.8"/>
<path d="M463.70,446.40 L463.68,443.48 L463.62,441.13 L463.51,438.96 L463.37,436.90 L463.18,434.91 L462.95,432.99 L462.67,431.12 L462.36,429.30 L462.00,427.52 L461.60,425.76 L461.16,424.05 L460.68,422.36 L460.15,420.70 L459.58,419.07 L458.97,417.46 L458.32,415.88 L457.62,414.32 L456.88,412.79 L456.09,411.28 L455.26,409.79 L454.39,408.32 L453.47,406.88 L452.51,405.46 L451.50,404.06 L450.45,402.68 L449.35,401.32 L448.21,399.99 L447.02,398.68 L445.78,397.39 L444.50,396.12 L443.17,394.87 L441.79,393.65 L440.36,392.44 L438.89,391.26 L437.36,390.11 L435.78,388.97 L434.15,387.86 L432.47,386.77 L430.74,385.70 L428.95,384.66 L427.11,383.64 L425.21,382.64 L423.26,381.67 L421.25,380.72 L419.18,379.80 L417.04,378.90 L414.85,378.02 L412.59,377.17 L410.26,376.34 L407.87,375.53 L405.41,374.75 L402.87,374.00 L400.27,373.27 L397.58,372.57 L394.81,371.89 L391.95,371.24 L389.01,370.61 L385.98,370.01 L382.84,369.43 L379.60,368.88 L376.26,368.36 L372.79,367.86 L369.20,367.39 L365.47,366.95 L361.60,366.53 L357.56,366.14 L353.35,365.77 L348.94,365.43 L344.31,365.12 L339.44,364.84 L334.28,364.58 L328.79,364.35 L322.90,364.15 L316.52,363.97 L309.54,363.82 L301.75,363.70 L292.81,363.60 L282.08,363.53 L267.81,363.49 L230.30,363.48" fill="none" stroke="#3a3a3a" stroke-width="0.8"/>
<path d="M441.50,446.40 L441.48,443.39 L441.42,441.03 L441.33,438.88 L441.20,436.85 L441.03,434.90 L440.82,433.02 L440.57,431.20 L440.29,429.42 L439.96,427.68 L439.60,425.99 L439.20,424.33 L438.77,422.70 L438.29,421.09 L437.77,419.52 L437.22,417.97 L436.63,416.45 L436.00,414.96 L435.32,413.49 L434.61,412.04 L433.86,410.61 L433.07,409.21 L432.24,407.83 L431.37,406.47 L430.46,405.14 L429.51,403.82 L428.52,402.53 L427.48,401.26 L426.41,400.01 L425.29,398.78 L424.13,397.58 L422.92,396.39 L421.67,395.23 L420.38,394.09 L419.05,392.97 L417.66,391.87 L416.24,390.79 L414.76,389.74 L413.24,388.71 L411.67,387.70 L410.06,386.71 L408.39,385.74 L406.67,384.80 L404.91,383.88 L403.08,382.98 L401.21,382.11 L399.28,381.25 L397.29,380.43 L395.25,379.62 L393.15,378.84 L390.98,378.08 L388.75,377.34 L386.46,376.63 L384.10,375.94 L381.67,375.28 L379.16,374.64 L376.58,374.03 L373.92,373.43 L371.17,372.87 L368.33,372.33 L365.40,371.81 L362.37,371.31 L359.24,370.85 L355.99,370.40 L352.61,369.98 L349.11,369.59 L345.46,369.22 L341.64,368.88 L337.66,368.56 L333.47,368.27 L329.06,368.00 L324.39,367.76 L319.42,367.54 L314.09,367.35 L308.32,367.18 L302.00,367.04 L294.95,366.92 L286.87,366.84 L277.15,366.77 L264.24,366.73 L230.30,366.72" fill="none" stroke="#3a3a3a" stroke-width="0.8"/>
<path d="M423.50,446.40 L423.48,443.32 L423.43,440.98 L423.34,438.85 L423.22,436.86 L423.06,434.96 L422.86,433.13 L422.63,431.36 L422.36,429.64 L422.06,427.97 L421.72,426.33 L421.35,424.73 L420.94,423.16 L420.49,421.63 L420.01,420.12 L419.49,418.64 L418.94,417.18 L418.35,415.76 L417.72,414.35 L417.05,412.97 L416.35,411.61 L415.61,410.28 L414.84,408.97 L414.02,407.68 L413.17,406.41 L412.28,405.16 L411.35,403.93 L410.38,402.73 L409.38,401.54 L408.33,400.38 L407.25,399.24 L406.12,398.12 L404.95,397.02 L403.75,395.94 L402.50,394.88 L401.21,393.84 L399.88,392.83 L398.50,391.83 L397.08,390.86 L395.62,389.91 L394.11,388.98 L392.55,388.07 L390.95,387.18 L389.30,386.31 L387.61,385.47 L385.86,384.64 L384.06,383.84 L382.21,383.06 L380.31,382.31 L378.35,381.57 L376.33,380.86 L374.26,380.17 L372.13,379.50 L369.93,378.85 L367.67,378.23 L365.34,377.63 L362.95,377.05 L360.48,376.50 L357.93,375.96 L355.30,375.45 L352.58,374.97 L349.77,374.51 L346.87,374.07 L343.86,373.65 L340.74,373.26 L337.50,372.89 L334.13,372.54 L330.61,372.22 L326.94,371.92 L323.08,371.65 L319.02,371.40 L314.73,371.17 L310.16,370.97 L305.28,370.79 L300.00,370.63 L294.23,370.50 L287.80,370.39 L280.45,370.31 L271.65,370.25 L260.03,370.21 L230.30,370.20" fill="none" stroke="#3a3a3a" stroke-width="0.8"/>
<path d="M405.14,446.40 L405.12,443.47 L405.07,441.23 L404.99,439.21 L404.87,437.31 L404.72,435.50 L404.53,433.76 L404.31,432.07 L404.06,430.43 L403.77,428.84 L403.45,427.28 L403.10,425.75 L402.71,424.26 L402.28,422.80 L401.83,421.36 L401.33,419.95 L400.81,418.56 L400.25,417.20 L399.65,415.87 L399.02,414.55 L398.35,413.26 L397.65,411.98 L396.92,410.73 L396.14,409.50 L395.34,408.30 L394.49,407.11 L393.61,405.94 L392.70,404.79 L391.74,403.66 L390.75,402.56 L389.73,401.47 L388.66,400.40 L387.56,399.35 L386.42,398.32 L385.24,397.32 L384.02,396.33 L382.76,395.36 L381.46,394.41 L380.12,393.48 L378.74,392.58 L377.32,391.69 L375.86,390.82 L374.35,389.98 L372.80,389.15 L371.20,388.35 L369.56,387.56 L367.87,386.80 L366.13,386.06 L364.34,385.33 L362.51,384.63 L360.62,383.95 L358.68,383.30 L356.68,382.66 L354.63,382.04 L352.52,381.45 L350.34,380.88 L348.11,380.33 L345.80,379.80 L343.43,379.29 L340.98,378.81 L338.46,378.34 L335.85,377.90 L333.16,377.48 L330.38,377.09 L327.49,376.71 L324.50,376.36 L321.39,376.03 L318.15,375.73 L314.78,375.44 L311.24,375.18 L307.53,374.94 L303.61,374.72 L299.45,374.53 L295.02,374.36 L290.24,374.21 L285.04,374.09 L279.27,373.98 L272.72,373.90 L264.94,373.85 L254.80,373.81 L230.30,373.80" fill="none" stroke="#3a3a3a" stroke-width="0.8"/>
<path d="M386.90,446.40 L386.88,443.79 L386.84,441.75 L386.76,439.89 L386.65,438.13 L386.50,436.44 L386.33,434.81 L386.12,433.23 L385.88,431.70 L385.61,430.19 L385.31,428.72 L384.97,427.28 L384.61,425.87 L384.21,424.49 L383.78,423.12 L383.31,421.78 L382.82,420.47 L382.29,419.17 L381.73,417.90 L381.14,416.64 L380.51,415.41 L379.85,414.20 L379.16,413.00 L378.43,411.83 L377.67,410.67 L376.88,409.53 L376.05,408.41 L375.19,407.31 L374.30,406.23 L373.37,405.17 L372.40,404.12 L371.41,403.09 L370.37,402.09 L369.30,401.10 L368.20,400.13 L367.05,399.18 L365.88,398.25 L364.66,397.33 L363.41,396.44 L362.12,395.56 L360.79,394.71 L359.42,393.87 L358.01,393.06 L356.56,392.26 L355.08,391.48 L353.55,390.72 L351.97,389.99 L350.35,389.27 L348.69,388.57 L346.99,387.89 L345.23,387.24 L343.43,386.60 L341.58,385.98 L339.68,385.39 L337.72,384.81 L335.71,384.26 L333.65,383.73 L331.52,383.21 L329.33,382.72 L327.08,382.25 L324.76,381.81 L322.36,381.38 L319.89,380.97 L317.34,380.59 L314.70,380.23 L311.97,379.88 L309.14,379.57 L306.19,379.27 L303.12,378.99 L299.92,378.74 L296.56,378.51 L293.02,378.30 L289.29,378.11 L285.31,377.94 L281.05,377.80 L276.42,377.68 L271.32,377.58 L265.57,377.50 L258.79,377.44 L250.09,377.41 L230.30,377.40" fill="none" stroke="#3a3a3a" stroke-width="0.8"/>
<path d="M368.90,446.40 L368.88,444.10 L368.84,442.26 L368.76,440.55 L368.66,438.93 L368.52,437.37 L368.35,435.86 L368.15,434.40 L367.92,432.96 L367.66,431.56 L367.37,430.18 L367.05,428.83 L366.70,427.51 L366.32,426.20 L365.90,424.92 L365.46,423.66 L364.98,422.42 L364.48,421.19 L363.94,419.99 L363.37,418.80 L362.77,417.63 L362.14,416.48 L361.48,415.34 L360.78,414.23 L360.05,413.13 L359.30,412.04 L358.51,410.98 L357.69,409.93 L356.83,408.90 L355.95,407.88 L355.03,406.89 L354.08,405.91 L353.09,404.95 L352.07,404.00 L351.02,403.07 L349.94,402.16 L348.82,401.27 L347.67,400.40 L346.48,399.54 L345.26,398.70 L344.00,397.88 L342.70,397.08 L341.37,396.30 L340.01,395.53 L338.60,394.79 L337.16,394.06 L335.68,393.35 L334.16,392.66 L332.60,391.99 L331.00,391.34 L329.36,390.71 L327.68,390.10 L325.95,389.51 L324.17,388.93 L322.35,388.38 L320.48,387.85 L318.57,387.34 L316.60,386.84 L314.57,386.37 L312.49,385.92 L310.35,385.49 L308.15,385.07 L305.89,384.68 L303.56,384.31 L301.15,383.96 L298.66,383.64 L296.09,383.33 L293.42,383.04 L290.66,382.78 L287.78,382.53 L284.77,382.31 L281.63,382.10 L278.32,381.92 L274.81,381.76 L271.08,381.62 L267.06,381.51 L262.67,381.41 L257.77,381.34 L252.09,381.28 L244.97,381.25 L230.30,381.24" fill="none" stroke="#3a3a3a" stroke-width="0.8"/>
<path d="M351.02,446.40 L351.01,444.44 L350.96,442.83 L350.89,441.32 L350.79,439.88 L350.66,438.49 L350.50,437.13 L350.31,435.81 L350.09,434.52 L349.84,433.25 L349.56,432.00 L349.26,430.77 L348.92,429.57 L348.56,428.38 L348.17,427.21 L347.74,426.06 L347.29,424.92 L346.81,423.80 L346.30,422.69 L345.76,421.60 L345.19,420.53 L344.59,419.47 L343.96,418.43 L343.31,417.40 L342.62,416.39 L341.90,415.39 L341.16,414.41 L340.38,413.44 L339.57,412.48 L338.73,411.55 L337.87,410.63 L336.97,409.72 L336.04,408.83 L335.09,407.95 L334.10,407.09 L333.08,406.25 L332.03,405.42 L330.94,404.61 L329.83,403.82 L328.69,403.04 L327.51,402.28 L326.30,401.53 L325.06,400.80 L323.78,400.09 L322.48,399.40 L321.14,398.72 L319.76,398.06 L318.35,397.42 L316.90,396.80 L315.42,396.19 L313.91,395.60 L312.35,395.03 L310.76,394.48 L309.13,393.95 L307.46,393.43 L305.75,392.93 L303.99,392.45 L302.20,391.99 L300.36,391.55 L298.47,391.13 L296.53,390.73 L294.54,390.34 L292.50,389.98 L290.40,389.63 L288.25,389.31 L286.02,389.00 L283.74,388.71 L281.37,388.44 L278.93,388.20 L276.40,387.97 L273.77,387.76 L271.03,387.57 L268.16,387.40 L265.15,387.25 L261.97,387.12 L258.57,387.01 L254.90,386.92 L250.86,386.85 L246.26,386.80 L240.65,386.77 L230.30,386.76" fill="none" stroke="#3a3a3a" stroke-width="0.8"/>
<path d="M333.50,446.40 L333.49,444.89 L333.44,443.56 L333.37,442.30 L333.27,441.07 L333.14,439.88 L332.99,438.71 L332.80,437.56 L332.59,436.42 L332.35,435.31 L332.08,434.20 L331.78,433.12 L331.46,432.04 L331.10,430.98 L330.72,429.93 L330.31,428.90 L329.87,427.87 L329.40,426.86 L328.90,425.86 L328.38,424.88 L327.83,423.90 L327.25,422.94 L326.64,421.98 L326.00,421.05 L325.33,420.12 L324.64,419.20 L323.92,418.30 L323.17,417.41 L322.39,416.54 L321.59,415.67 L320.75,414.82 L319.89,413.99 L319.00,413.16 L318.08,412.35 L317.14,411.56 L316.16,410.78 L315.16,410.01 L314.13,409.25 L313.07,408.52 L311.98,407.79 L310.87,407.08 L309.72,406.39 L308.55,405.71 L307.35,405.04 L306.12,404.40 L304.86,403.76 L303.57,403.15 L302.25,402.55 L300.91,401.96 L299.53,401.39 L298.12,400.84 L296.68,400.31 L295.21,399.79 L293.71,399.29 L292.18,398.80 L290.61,398.34 L289.01,397.89 L287.38,397.45 L285.71,397.04 L284.01,396.64 L282.26,396.26 L280.49,395.90 L278.67,395.56 L276.81,395.23 L274.90,394.92 L272.96,394.63 L270.96,394.36 L268.91,394.11 L266.81,393.88 L264.64,393.66 L262.41,393.46 L260.11,393.28 L257.73,393.12 L255.25,392.98 L252.66,392.86 L249.94,392.76 L247.05,392.67 L243.95,392.60 L240.52,392.56 L236.53,392.53 L230.30,392.52" fill="none" stroke="#3a3a3a" stroke-width="0.8"/>
<path d="M313.10,446.40 L313.09,445.31 L313.05,444.30 L312.98,443.31 L312.89,442.34 L312.77,441.38 L312.62,440.43 L312.45,439.50 L312.25,438.57 L312.02,437.65 L311.77,436.73 L311.49,435.83 L311.19,434.93 L310.86,434.04 L310.50,433.16 L310.12,432.29 L309.71,431.42 L309.27,430.56 L308.81,429.71 L308.33,428.87 L307.81,428.04 L307.28,427.21 L306.71,426.40 L306.12,425.59 L305.51,424.79 L304.87,424.00 L304.20,423.22 L303.51,422.46 L302.80,421.70 L302.06,420.95 L301.30,420.21 L300.51,419.48 L299.70,418.77 L298.86,418.06 L298.00,417.37 L297.11,416.68 L296.20,416.01 L295.27,415.35 L294.31,414.70 L293.33,414.07 L292.33,413.45 L291.30,412.84 L290.25,412.24 L289.18,411.66 L288.09,411.09 L286.97,410.53 L285.83,409.98 L284.66,409.45 L283.48,408.94 L282.27,408.44 L281.04,407.95 L279.78,407.48 L278.51,407.02 L277.21,406.57 L275.89,406.14 L274.54,405.73 L273.18,405.33 L271.79,404.95 L270.38,404.58 L268.94,404.23 L267.49,403.89 L266.01,403.57 L264.50,403.26 L262.97,402.97 L261.42,402.70 L259.84,402.44 L258.23,402.20 L256.60,401.98 L254.93,401.77 L253.24,401.57 L251.51,401.40 L249.75,401.24 L247.95,401.10 L246.10,400.97 L244.21,400.86 L242.25,400.77 L240.23,400.69 L238.12,400.64 L235.88,400.59 L233.43,400.57 L230.30,400.56" fill="none" stroke="#3a3a3a" stroke-width="0.8"/>
<path d="M286.22,446.40 L286.21,445.66 L286.18,444.95 L286.12,444.24 L286.05,443.54 L285.95,442.85 L285.83,442.16 L285.69,441.48 L285.53,440.80 L285.35,440.13 L285.15,439.46 L284.92,438.79 L284.67,438.13 L284.41,437.47 L284.12,436.82 L283.81,436.17 L283.48,435.52 L283.13,434.89 L282.76,434.25 L282.37,433.62 L281.96,433.00 L281.53,432.39 L281.08,431.77 L280.61,431.17 L280.13,430.57 L279.62,429.98 L279.09,429.39 L278.54,428.82 L277.98,428.25 L277.40,427.68 L276.80,427.13 L276.18,426.58 L275.54,426.04 L274.89,425.50 L274.21,424.98 L273.53,424.46 L272.82,423.95 L272.10,423.45 L271.36,422.96 L270.61,422.48 L269.84,422.01 L269.06,421.55 L268.26,421.10 L267.44,420.65 L266.62,420.22 L265.78,419.80 L264.92,419.38 L264.05,418.98 L263.17,418.59 L262.27,418.21 L261.37,417.84 L260.45,417.48 L259.52,417.13 L258.58,416.79 L257.62,416.46 L256.66,416.15 L255.69,415.84 L254.70,415.55 L253.71,415.27 L252.71,415.00 L251.70,414.74 L250.68,414.50 L249.65,414.26 L248.62,414.04 L247.58,413.83 L246.53,413.64 L245.48,413.45 L244.42,413.28 L243.35,413.12 L242.28,412.98 L241.21,412.84 L240.13,412.72 L239.05,412.61 L237.96,412.51 L236.87,412.43 L235.78,412.36 L234.69,412.30 L233.59,412.26 L232.50,412.23 L231.40,412.21 L230.30,412.20" fill="none" stroke="#3a3a3a" stroke-width="0.8"/>
<g fill="none" stroke="#ff3a3a" stroke-width="0.8" stroke-opacity="0.8"><path d="M230.30,434.67 L242.46,434.66 L254.62,434.66 L266.78,434.66 L278.95,434.65 L291.09,434.65 L303.24,434.64 L315.39,434.63 L327.53,434.63 L339.65,434.62 L351.77,434.61 L363.88,434.60 L376.00,434.58 L388.05,434.56 L400.10,434.53 L412.16,434.51 L424.21,434.48 L436.17,434.45 L448.13,434.43 L460.10,434.40 L472.06,434.37 L483.95,434.38 L495.84,434.38 L507.73,434.38 L519.62,434.38 L531.53,434.38 L543.44,434.39 L555.36,434.39 L567.27,434.39 L579.18,434.39 L591.09,434.39 L603.00,434.39 L614.92,434.39 L626.83,434.39 L638.74,434.40 L650.67,434.40 L662.59,434.40 L674.52,434.40 L686.45,434.40 L698.37,434.40 L710.30,434.40"/><path d="M230.30,423.47 L242.52,423.45 L254.75,423.44 L266.97,423.42 L279.19,423.41 L291.40,423.39 L303.60,423.37 L315.80,423.34 L328.01,423.30 L340.17,423.27 L352.33,423.23 L364.50,423.19 L376.66,423.13 L388.73,423.03 L400.80,422.93 L412.87,422.83 L424.94,422.72 L436.89,422.61 L448.84,422.51 L460.79,422.40 L472.74,422.29 L484.59,422.30 L496.44,422.31 L508.28,422.32 L520.13,422.33 L532.01,422.33 L543.89,422.34 L555.76,422.35 L567.64,422.35 L579.52,422.36 L591.40,422.37 L603.28,422.37 L615.15,422.37 L627.03,422.38 L638.91,422.38 L650.81,422.38 L662.71,422.39 L674.61,422.39 L686.50,422.39 L698.40,422.40 L710.30,422.40"/><path d="M230.30,412.80 L242.59,412.77 L254.87,412.73 L267.16,412.70 L279.44,412.67 L291.70,412.63 L303.96,412.59 L316.22,412.51 L328.48,412.43 L340.69,412.35 L352.90,412.26 L365.11,412.18 L377.32,412.05 L389.41,411.83 L401.50,411.60 L413.59,411.36 L425.68,411.12 L437.62,410.88 L449.55,410.64 L461.49,410.40 L473.42,410.16 L485.23,410.18 L497.03,410.21 L508.83,410.22 L520.64,410.24 L532.48,410.25 L544.33,410.27 L556.17,410.28 L568.02,410.30 L579.86,410.31 L591.70,410.33 L603.55,410.34 L615.39,410.34 L627.24,410.35 L639.08,410.36 L650.95,410.36 L662.82,410.37 L674.69,410.38 L686.56,410.39 L698.43,410.39 L710.30,410.40"/><path d="M230.30,402.67 L242.65,402.61 L255.00,402.55 L267.35,402.49 L279.69,402.43 L292.01,402.37 L304.33,402.30 L316.64,402.15 L328.96,402.01 L341.21,401.86 L353.47,401.71 L365.72,401.57 L377.97,401.34 L390.08,400.93 L402.19,400.53 L414.31,400.11 L426.42,399.68 L438.34,399.25 L450.26,398.83 L462.18,398.40 L474.10,397.97 L485.86,398.02 L497.62,398.06 L509.39,398.09 L521.15,398.11 L532.96,398.14 L544.77,398.17 L556.58,398.19 L568.39,398.22 L580.20,398.25 L592.01,398.27 L603.82,398.28 L615.63,398.30 L627.44,398.31 L639.25,398.32 L651.09,398.34 L662.93,398.35 L674.78,398.36 L686.62,398.37 L698.46,398.39 L710.30,398.40"/><path d="M230.30,393.07 L242.71,392.97 L255.12,392.88 L267.53,392.79 L279.94,392.70 L292.32,392.61 L304.69,392.49 L317.06,392.26 L329.44,392.03 L341.73,391.81 L354.03,391.58 L366.33,391.35 L378.63,390.99 L390.76,390.36 L402.89,389.73 L415.02,389.07 L427.15,388.40 L439.06,387.73 L450.97,387.07 L462.87,386.40 L474.78,385.73 L486.50,385.80 L498.22,385.87 L509.94,385.91 L521.66,385.95 L533.44,385.99 L545.21,386.03 L556.99,386.07 L568.76,386.12 L580.54,386.16 L592.32,386.20 L604.09,386.22 L615.87,386.24 L627.64,386.26 L639.42,386.28 L651.23,386.30 L663.05,386.32 L674.86,386.34 L686.67,386.36 L698.49,386.38 L710.30,386.40"/><path d="M230.30,384.00 L242.77,383.87 L255.25,383.74 L267.72,383.60 L280.19,383.47 L292.62,383.34 L305.05,383.17 L317.48,382.84 L329.91,382.51 L342.26,382.19 L354.60,381.86 L366.94,381.53 L379.29,381.01 L391.44,380.10 L403.59,379.19 L415.74,378.24 L427.89,377.28 L439.78,376.32 L451.68,375.36 L463.57,374.40 L475.46,373.44 L487.14,373.54 L498.81,373.63 L510.49,373.69 L522.17,373.75 L533.91,373.81 L545.65,373.87 L557.40,373.93 L569.14,373.99 L580.88,374.05 L592.62,374.11 L604.36,374.14 L616.11,374.17 L627.85,374.20 L639.59,374.23 L651.38,374.26 L663.16,374.28 L674.94,374.31 L686.73,374.34 L698.51,374.37 L710.30,374.40"/><path d="M230.30,375.47 L242.84,375.29 L255.37,375.11 L267.91,374.93 L280.44,374.75 L292.93,374.57 L305.41,374.33 L317.90,373.89 L330.39,373.44 L342.78,373.00 L355.17,372.55 L367.56,372.11 L379.95,371.40 L392.12,370.16 L404.29,368.93 L416.46,367.63 L428.63,366.32 L440.50,365.01 L452.38,363.71 L464.26,362.40 L476.14,361.09 L487.78,361.22 L499.41,361.35 L511.05,361.44 L522.68,361.52 L534.39,361.60 L546.10,361.68 L557.80,361.76 L569.51,361.84 L581.22,361.93 L592.93,362.01 L604.64,362.05 L616.34,362.09 L628.05,362.13 L639.76,362.16 L651.52,362.20 L663.27,362.24 L675.03,362.28 L686.79,362.32 L698.54,362.36 L710.30,362.40"/><path d="M230.30,367.47 L242.90,367.23 L255.50,367.00 L268.09,366.76 L280.69,366.53 L293.23,366.29 L305.78,365.99 L318.32,365.40 L330.86,364.82 L343.30,364.24 L355.73,363.66 L368.17,363.08 L380.60,362.15 L392.79,360.54 L404.98,358.92 L417.17,357.23 L429.36,355.52 L441.23,353.81 L453.09,352.11 L464.96,350.40 L476.82,348.69 L488.41,348.86 L500.01,349.03 L511.60,349.14 L523.19,349.25 L534.86,349.35 L546.54,349.46 L558.21,349.57 L569.89,349.67 L581.56,349.78 L593.23,349.89 L604.91,349.94 L616.58,349.99 L628.26,350.04 L639.93,350.09 L651.66,350.14 L663.39,350.20 L675.12,350.25 L686.84,350.30 L698.57,350.35 L710.30,350.40"/><path d="M230.30,360.00 L242.96,359.70 L255.62,359.40 L268.28,359.11 L280.94,358.81 L293.54,358.51 L306.14,358.12 L318.74,357.39 L331.34,356.65 L343.82,355.92 L356.30,355.18 L368.78,354.45 L381.26,353.28 L393.47,351.23 L405.68,349.19 L417.89,347.04 L430.10,344.88 L441.95,342.72 L453.80,340.56 L465.65,338.40 L477.50,336.24 L489.05,336.46 L500.60,336.67 L512.15,336.81 L523.70,336.94 L535.34,337.08 L546.98,337.21 L558.62,337.35 L570.26,337.48 L581.90,337.62 L593.54,337.75 L605.18,337.82 L616.82,337.88 L628.46,337.95 L640.10,338.01 L651.80,338.08 L663.50,338.14 L675.20,338.21 L686.90,338.27 L698.60,338.34 L710.30,338.40"/><path d="M230.30,349.44 L242.83,349.10 L255.36,348.77 L267.88,348.43 L280.41,348.10 L292.89,347.76 L305.37,346.81 L317.85,345.85 L330.33,344.90 L342.72,343.95 L355.10,342.99 L367.48,342.04 L379.87,340.83 L392.04,339.10 L404.20,337.37 L416.37,334.37 L428.54,331.22 L440.42,328.08"/><path d="M230.30,337.20 L242.70,336.82 L255.09,336.43 L267.49,336.05 L279.88,335.66 L292.24,335.28 L304.60,333.86 L316.96,332.44 L329.32,331.02 L341.61,329.59 L353.90,328.17 L366.19,326.75 L378.48,324.98 L390.60,322.51 L402.73,320.04"/><path d="M230.30,321.12 L242.56,320.69 L254.83,320.26 L267.09,319.82 L279.36,319.39 L291.60,318.96 L303.84,317.40 L316.08,315.84 L328.32,314.28 L340.51,312.72 L352.70,311.16 L364.89,309.60"/><path d="M230.30,304.20 L242.43,303.70 L254.56,303.19 L266.70,302.69 L278.83,302.18 L290.95,301.68 L303.07,300.12 L315.19,298.56 L327.31,297.00"/><path d="M230.30,446.40 L230.30,434.67 L230.30,423.47 L230.30,412.80 L230.30,402.67 L230.30,393.07 L230.30,384.00 L230.30,375.47 L230.30,367.47 L230.30,360.00 L230.30,349.44 L230.30,337.20 L230.30,321.12 L230.30,304.20 L230.30,285.60"/><path d="M242.40,446.40 L242.46,434.66 L242.52,423.45 L242.59,412.77 L242.65,402.61 L242.71,392.97 L242.77,383.87 L242.84,375.29 L242.90,367.23 L242.96,359.70 L242.83,349.10 L242.70,336.82 L242.56,320.69 L242.43,303.70 L242.30,285.24"/><path d="M254.50,446.40 L254.62,434.66 L254.75,423.44 L254.87,412.73 L255.00,402.55 L255.12,392.88 L255.25,383.74 L255.37,375.11 L255.50,367.00 L255.62,359.40 L255.36,348.77 L255.09,336.43 L254.83,320.26 L254.56,303.19 L254.30,284.88"/><path d="M266.60,446.40 L266.78,434.66 L266.97,423.42 L267.16,412.70 L267.35,402.49 L267.53,392.79 L267.72,383.60 L267.91,374.93 L268.09,366.76 L268.28,359.11 L267.88,348.43 L267.49,336.05 L267.09,319.82 L266.70,302.69 L266.30,284.52"/><path d="M278.70,446.40 L278.95,434.65 L279.19,423.41 L279.44,412.67 L279.69,402.43 L279.94,392.70 L280.19,383.47 L280.44,374.75 L280.69,366.53 L280.94,358.81 L280.41,348.10 L279.88,335.66 L279.36,319.39 L278.83,302.18 L278.30,284.16"/><path d="M290.79,446.40 L291.09,434.65 L291.40,423.39 L291.70,412.63 L292.01,402.37 L292.32,392.61 L292.62,383.34 L292.93,374.57 L293.23,366.29 L293.54,358.51 L292.89,347.76 L292.24,335.28 L291.60,318.96 L290.95,301.68 L290.30,283.80"/><path d="M302.88,446.40 L303.24,434.64 L303.60,423.37 L303.96,412.59 L304.33,402.30 L304.69,392.49 L305.05,383.17 L305.41,374.33 L305.78,365.99 L306.14,358.12 L305.37,346.81 L304.60,333.86 L303.84,317.40 L303.07,300.12 L302.56,287.16"/><path d="M314.97,446.40 L315.39,434.63 L315.80,423.34 L316.22,412.51 L316.64,402.15 L317.06,392.26 L317.48,382.84 L317.90,373.89 L318.32,365.40 L318.74,357.39 L317.85,345.85 L316.96,332.44 L316.08,315.84 L315.19,298.56 L314.89,291.56"/><path d="M327.06,446.40 L327.53,434.63 L328.01,423.30 L328.48,412.43 L328.96,402.01 L329.44,392.03 L329.91,382.51 L330.39,373.44 L330.86,364.82 L331.34,356.65 L330.33,344.90 L329.32,331.02 L328.32,314.28 L327.31,297.00"/><path d="M339.13,446.40 L339.65,434.62 L340.17,423.27 L340.69,412.35 L341.21,401.86 L341.73,391.81 L342.26,382.19 L342.78,373.00 L343.30,364.24 L343.82,355.92 L342.72,343.95 L341.61,329.59 L340.51,312.72 L339.77,300.16"/><path d="M351.20,446.40 L351.77,434.61 L352.33,423.23 L352.90,412.26 L353.47,401.71 L354.03,391.58 L354.60,381.86 L355.17,372.55 L355.73,363.66 L356.30,355.18 L355.10,342.99 L353.90,328.17 L352.70,311.16 L352.30,304.36"/><path d="M363.27,446.40 L363.88,434.60 L364.50,423.19 L365.11,412.18 L365.72,401.57 L366.33,391.35 L366.94,381.53 L367.56,372.11 L368.17,363.08 L368.78,354.45 L367.48,342.04 L366.19,326.75 L364.89,309.60"/><path d="M375.34,446.40 L376.00,434.58 L376.66,423.13 L377.32,412.05 L377.97,401.34 L378.63,390.99 L379.29,381.01 L379.95,371.40 L380.60,362.15 L381.26,353.28 L379.87,340.83 L378.48,324.98 L377.55,312.65"/><path d="M387.38,446.40 L388.05,434.56 L388.73,423.03 L389.41,411.83 L390.08,400.93 L390.76,390.36 L391.44,380.10 L392.12,370.16 L392.79,360.54 L393.47,351.23 L392.04,339.10 L390.60,322.51 L390.12,316.13"/><path d="M399.41,446.40 L400.10,434.53 L400.80,422.93 L401.50,411.60 L402.19,400.53 L402.89,389.73 L403.59,379.19 L404.29,368.93 L404.98,358.92 L405.68,349.19 L404.20,337.37 L402.73,320.04"/><path d="M411.44,446.40 L412.16,434.51 L412.87,422.83 L413.59,411.36 L414.31,400.11 L415.02,389.07 L415.74,378.24 L416.46,367.63 L417.17,357.23 L417.89,347.04 L416.37,334.37 L415.36,322.74"/><path d="M423.47,446.40 L424.21,434.48 L424.94,422.72 L425.68,411.12 L426.42,399.68 L427.15,388.40 L427.89,377.28 L428.63,366.32 L429.36,355.52 L430.10,344.88 L428.54,331.22 L428.02,325.42"/><path d="M435.45,446.40 L436.17,434.45 L436.89,422.61 L437.62,410.88 L438.34,399.25 L439.06,387.73 L439.78,376.32 L440.50,365.01 L441.23,353.81 L441.95,342.72 L440.42,328.08"/><path d="M447.43,446.40 L448.13,434.43 L448.84,422.51 L449.55,410.64 L450.26,398.83 L450.97,387.07 L451.68,375.36 L452.38,363.71 L453.09,352.11 L453.80,340.56 L452.80,330.16"/><path d="M459.40,446.40 L460.10,434.40 L460.79,422.40 L461.49,410.40 L462.18,398.40 L462.87,386.40 L463.57,374.40 L464.26,362.40 L464.96,350.40 L465.65,338.40 L465.16,332.88"/><path d="M471.38,446.40 L472.06,434.37 L472.74,422.29 L473.42,410.16 L474.10,397.97 L474.78,385.73 L475.46,373.44 L476.14,361.09 L476.82,348.69 L477.50,336.24"/><path d="M483.31,446.40 L483.95,434.38 L484.59,422.30 L485.23,410.18 L485.86,398.02 L486.50,385.80 L487.14,373.54 L487.78,361.22 L488.41,348.86 L489.05,336.46"/><path d="M495.25,446.40 L495.84,434.38 L496.44,422.31 L497.03,410.21 L497.62,398.06 L498.22,385.87 L498.81,373.63 L499.41,361.35 L500.01,349.03 L500.60,336.67"/><path d="M507.18,446.40 L507.73,434.38 L508.28,422.32 L508.83,410.22 L509.39,398.09 L509.94,385.91 L510.49,373.69 L511.05,361.44 L511.60,349.14 L512.15,336.81"/><path d="M519.11,446.40 L519.62,434.38 L520.13,422.33 L520.64,410.24 L521.15,398.11 L521.66,385.95 L522.17,373.75 L522.68,361.52 L523.19,349.25 L523.70,336.94"/><path d="M531.06,446.40 L531.53,434.38 L532.01,422.33 L532.48,410.25 L532.96,398.14 L533.44,385.99 L533.91,373.81 L534.39,361.60 L534.86,349.35 L535.34,337.08"/><path d="M543.00,446.40 L543.44,434.39 L543.89,422.34 L544.33,410.27 L544.77,398.17 L545.21,386.03 L545.65,373.87 L546.10,361.68 L546.54,349.46 L546.98,337.21"/><path d="M554.95,446.40 L555.36,434.39 L555.76,422.35 L556.17,410.28 L556.58,398.19 L556.99,386.07 L557.40,373.93 L557.80,361.76 L558.21,349.57 L558.62,337.35"/><path d="M566.89,446.40 L567.27,434.39 L567.64,422.35 L568.02,410.30 L568.39,398.22 L568.76,386.12 L569.14,373.99 L569.51,361.84 L569.89,349.67 L570.26,337.48"/><path d="M578.84,446.40 L579.18,434.39 L579.52,422.36 L579.86,410.31 L580.20,398.25 L580.54,386.16 L580.88,374.05 L581.22,361.93 L581.56,349.78 L581.90,337.62"/><path d="M590.79,446.40 L591.09,434.39 L591.40,422.37 L591.70,410.33 L592.01,398.27 L592.32,386.20 L592.62,374.11 L592.93,362.01 L593.23,349.89 L593.54,337.75"/><path d="M602.73,446.40 L603.00,434.39 L603.28,422.37 L603.55,410.34 L603.82,398.28 L604.09,386.22 L604.36,374.14 L604.64,362.05 L604.91,349.94 L605.18,337.82"/><path d="M614.68,446.40 L614.92,434.39 L615.15,422.37 L615.39,410.34 L615.63,398.30 L615.87,386.24 L616.11,374.17 L616.34,362.09 L616.58,349.99 L616.82,337.88"/><path d="M626.62,446.40 L626.83,434.39 L627.03,422.38 L627.24,410.35 L627.44,398.31 L627.64,386.26 L627.85,374.20 L628.05,362.13 L628.26,350.04 L628.46,337.95"/><path d="M638.57,446.40 L638.74,434.40 L638.91,422.38 L639.08,410.36 L639.25,398.32 L639.42,386.28 L639.59,374.23 L639.76,362.16 L639.93,350.09 L640.10,338.01"/><path d="M650.52,446.40 L650.67,434.40 L650.81,422.38 L650.95,410.36 L651.09,398.34 L651.23,386.30 L651.38,374.26 L651.52,362.20 L651.66,350.14 L651.80,338.08"/><path d="M662.48,446.40 L662.59,434.40 L662.71,422.39 L662.82,410.37 L662.93,398.35 L663.05,386.32 L663.16,374.28 L663.27,362.24 L663.39,350.20 L663.50,338.14"/><path d="M674.43,446.40 L674.52,434.40 L674.61,422.39 L674.69,410.38 L674.78,398.36 L674.86,386.34 L674.94,374.31 L675.03,362.28 L675.12,350.25 L675.20,338.21"/><path d="M686.39,446.40 L686.45,434.40 L686.50,422.39 L686.56,410.39 L686.62,398.37 L686.67,386.36 L686.73,374.34 L686.79,362.32 L686.84,350.30 L686.90,338.27"/><path d="M698.35,446.40 L698.37,434.40 L698.40,422.40 L698.43,410.39 L698.46,398.39 L698.49,386.38 L698.51,374.37 L698.54,362.36 L698.57,350.35 L698.60,338.34"/><path d="M710.30,446.40 L710.30,434.40 L710.30,422.40 L710.30,410.40 L710.30,398.40 L710.30,386.40 L710.30,374.40 L710.30,362.40 L710.30,350.40 L710.30,338.40"/><path d="M230.30,285.60 L242.30,285.24 L254.30,284.88 L266.30,284.52 L278.30,284.16 L290.30,283.80 L293.36,284.64 L296.42,285.45 L299.48,286.28 L302.56,287.16 L305.63,288.12 L308.71,289.17 L311.80,290.32 L314.89,291.56 L317.99,292.88 L321.09,294.25 L324.20,295.64 L327.31,297.00 L330.42,297.79 L333.53,298.55 L336.65,299.33 L339.77,300.16 L342.90,301.07 L346.03,302.07 L349.16,303.17 L352.30,304.36 L355.44,305.63 L358.59,306.95 L361.74,308.29 L364.89,309.60 L368.05,310.38 L371.21,311.14 L374.38,311.90 L377.55,312.65 L380.69,313.43 L383.83,314.27 L386.98,315.17 L390.12,316.13 L393.27,317.12 L396.42,318.13 L399.57,319.12 L402.73,320.04 L405.88,320.81 L409.04,321.49 L412.20,322.12 L415.36,322.74 L418.52,323.36 L421.69,324.02 L424.85,324.70 L428.02,325.42 L431.12,326.14 L434.22,326.85 L437.32,327.51 L440.42,328.08 L443.52,328.63 L446.61,329.14 L449.71,329.64 L452.80,330.16 L455.89,330.74 L458.98,331.38 L462.07,332.10 L465.16,332.88 L468.25,333.72 L471.33,334.58 L474.42,335.43 L477.50,336.24 L489.05,336.46 L500.60,336.67 L512.15,336.81 L523.70,336.94 L535.34,337.08 L546.98,337.21 L558.62,337.35 L570.26,337.48 L581.90,337.62 L593.54,337.75 L605.18,337.82 L616.82,337.88 L628.46,337.95 L640.10,338.01 L651.80,338.08 L663.50,338.14 L675.20,338.21 L686.90,338.27 L698.60,338.34 L710.30,338.40"/></g>
<path d="M230.30,446.40 V278.40 H290.30 L470.30,338.40" fill="none" stroke="#1a1a1a" stroke-width="1.4"/>
<path d="M230.30,338.40 H710.30 V446.40 H230.30" fill="none" stroke="#505050" stroke-width="1.5"/>
<path d="M230.30,350.40 H710.30" fill="none" stroke="#303030" stroke-width="1.3"/>
<path d="M206.30,278.40 V470.40 H710.30" fill="none" stroke="#7e7e7e" stroke-width="1.15"/>
<line x1="230.30" y1="470.40" x2="230.30" y2="462.40" stroke="#7e7e7e" stroke-width="1.15"/>
<line x1="254.30" y1="470.40" x2="254.30" y2="462.40" stroke="#7e7e7e" stroke-width="1.15"/>
<line x1="278.30" y1="470.40" x2="278.30" y2="462.40" stroke="#7e7e7e" stroke-width="1.15"/>
<line x1="302.30" y1="470.40" x2="302.30" y2="462.40" stroke="#7e7e7e" stroke-width="1.15"/>
<line x1="326.30" y1="470.40" x2="326.30" y2="462.40" stroke="#7e7e7e" stroke-width="1.15"/>
<line x1="350.30" y1="470.40" x2="350.30" y2="462.40" stroke="#7e7e7e" stroke-width="1.15"/>
<line x1="374.30" y1="470.40" x2="374.30" y2="462.40" stroke="#7e7e7e" stroke-width="1.15"/>
<line x1="398.30" y1="470.40" x2="398.30" y2="462.40" stroke="#7e7e7e" stroke-width="1.15"/>
<line x1="422.30" y1="470.40" x2="422.30" y2="462.40" stroke="#7e7e7e" stroke-width="1.15"/>
<line x1="446.30" y1="470.40" x2="446.30" y2="462.40" stroke="#7e7e7e" stroke-width="1.15"/>
<line x1="470.30" y1="470.40" x2="470.30" y2="462.40" stroke="#7e7e7e" stroke-width="1.15"/>
<line x1="494.30" y1="470.40" x2="494.30" y2="462.40" stroke="#7e7e7e" stroke-width="1.15"/>
<line x1="518.30" y1="470.40" x2="518.30" y2="462.40" stroke="#7e7e7e" stroke-width="1.15"/>
<line x1="542.30" y1="470.40" x2="542.30" y2="462.40" stroke="#7e7e7e" stroke-width="1.15"/>
<line x1="566.30" y1="470.40" x2="566.30" y2="462.40" stroke="#7e7e7e" stroke-width="1.15"/>
<line x1="590.30" y1="470.40" x2="590.30" y2="462.40" stroke="#7e7e7e" stroke-width="1.15"/>
<line x1="614.30" y1="470.40" x2="614.30" y2="462.40" stroke="#7e7e7e" stroke-width="1.15"/>
<line x1="638.30" y1="470.40" x2="638.30" y2="462.40" stroke="#7e7e7e" stroke-width="1.15"/>
<line x1="662.30" y1="470.40" x2="662.30" y2="462.40" stroke="#7e7e7e" stroke-width="1.15"/>
<line x1="686.30" y1="470.40" x2="686.30" y2="462.40" stroke="#7e7e7e" stroke-width="1.15"/>
<line x1="710.30" y1="470.40" x2="710.30" y2="462.40" stroke="#7e7e7e" stroke-width="1.15"/>
<line x1="206.30" y1="446.40" x2="214.30" y2="446.40" stroke="#7e7e7e" stroke-width="1.15"/>
<line x1="206.30" y1="422.40" x2="214.30" y2="422.40" stroke="#7e7e7e" stroke-width="1.15"/>
<line x1="206.30" y1="398.40" x2="214.30" y2="398.40" stroke="#7e7e7e" stroke-width="1.15"/>
<line x1="206.30" y1="374.40" x2="214.30" y2="374.40" stroke="#7e7e7e" stroke-width="1.15"/>
<line x1="206.30" y1="350.40" x2="214.30" y2="350.40" stroke="#7e7e7e" stroke-width="1.15"/>
<line x1="206.30" y1="326.40" x2="214.30" y2="326.40" stroke="#7e7e7e" stroke-width="1.15"/>
<line x1="206.30" y1="302.40" x2="214.30" y2="302.40" stroke="#7e7e7e" stroke-width="1.15"/>
<line x1="206.30" y1="278.40" x2="214.30" y2="278.40" stroke="#7e7e7e" stroke-width="1.15"/>
<text x="206.30" y="481.7" text-anchor="middle" font-size="7">-2</text>
<text x="230.30" y="481.7" text-anchor="middle" font-size="7">0</text>
<text x="254.30" y="481.7" text-anchor="middle" font-size="7">2</text>
<text x="278.30" y="481.7" text-anchor="middle" font-size="7">4</text>
<text x="302.30" y="481.7" text-anchor="middle" font-size="7">6</text>
<text x="326.30" y="481.7" text-anchor="middle" font-size="7">8</text>
<text x="350.30" y="481.7" text-anchor="middle" font-size="7">10</text>
<text x="374.30" y="481.7" text-anchor="middle" font-size="7">12</text>
<text x="398.30" y="481.7" text-anchor="middle" font-size="7">14</text>
<text x="422.30" y="481.7" text-anchor="middle" font-size="7">16</text>
<text x="446.30" y="481.7" text-anchor="middle" font-size="7">18</text>
<text x="470.30" y="481.7" text-anchor="middle" font-size="7">20</text>
<text x="494.30" y="481.7" text-anchor="middle" font-size="7">22</text>
<text x="518.30" y="481.7" text-anchor="middle" font-size="7">24</text>
<text x="542.30" y="481.7" text-anchor="middle" font-size="7">26</text>
<text x="566.30" y="481.7" text-anchor="middle" font-size="7">28</text>
<text x="590.30" y="481.7" text-anchor="middle" font-size="7">30</text>
<text x="614.30" y="481.7" text-anchor="middle" font-size="7">32</text>
<text x="638.30" y="481.7" text-anchor="middle" font-size="7">34</text>
<text x="662.30" y="481.7" text-anchor="middle" font-size="7">36</text>
<text x="686.30" y="481.7" text-anchor="middle" font-size="7">38</text>
<text x="710.30" y="481.7" text-anchor="middle" font-size="7">40</text>
<text x="201.6" y="472.90" text-anchor="end" font-size="7">-2</text>
<text x="201.6" y="448.90" text-anchor="end" font-size="7">0</text>
<text x="201.6" y="424.90" text-anchor="end" font-size="7">2</text>
<text x="201.6" y="400.90" text-anchor="end" font-size="7">4</text>
<text x="201.6" y="376.90" text-anchor="end" font-size="7">6</text>
<text x="201.6" y="352.90" text-anchor="end" font-size="7">8</text>
<text x="201.6" y="328.90" text-anchor="end" font-size="7">10</text>
<text x="201.6" y="304.90" text-anchor="end" font-size="7">12</text>
<text x="201.6" y="280.90" text-anchor="end" font-size="7">14</text>
<text x="414.9" y="282.6" font-size="9.8" fill="#1a1a1a" textLength="215.1" lengthAdjust="spacingAndGlyphs">File Name: Soft ground coupled consolidation.gsz</text>
<text x="428.9" y="498.5" font-size="11.4" fill="#1a1a1a" textLength="60.4" lengthAdjust="spacingAndGlyphs">Distance - m</text>
<text transform="translate(185.7,407.4) rotate(-90)" font-size="11.4" fill="#1a1a1a" textLength="66.6" lengthAdjust="spacingAndGlyphs">Elevation - m</text>
<rect x="646.6" y="155" width="63.9" height="165.9" fill="#fff" stroke="#8a8a8a" stroke-width="0.9"/>
<text x="651.2" y="167.3" font-size="8.4" fill="#1a1a1a" textLength="49" lengthAdjust="spacingAndGlyphs">Excess PWP</text>
<rect x="651.6" y="176.50" width="5.8" height="5.8" fill="#80bcfa" stroke="#5a5a5a" stroke-width="0.8"/>
<text x="661.6" y="182.30" font-size="8.5" fill="#1a1a1a">0 - 5 kPa</text>
<rect x="651.6" y="186.65" width="5.8" height="5.8" fill="#80d8fa" stroke="#5a5a5a" stroke-width="0.8"/>
<text x="661.6" y="192.45" font-size="8.5" fill="#1a1a1a">5 - 10 kPa</text>
<rect x="651.6" y="196.80" width="5.8" height="5.8" fill="#80fafa" stroke="#5a5a5a" stroke-width="0.8"/>
<text x="661.6" y="202.60" font-size="8.5" fill="#1a1a1a">10 - 15 kPa</text>
<rect x="651.6" y="206.95" width="5.8" height="5.8" fill="#80ffd2" stroke="#5a5a5a" stroke-width="0.8"/>
<text x="661.6" y="212.75" font-size="8.5" fill="#1a1a1a">15 - 20 kPa</text>
<rect x="651.6" y="217.10" width="5.8" height="5.8" fill="#80ffb0" stroke="#5a5a5a" stroke-width="0.8"/>
<text x="661.6" y="222.90" font-size="8.5" fill="#1a1a1a">20 - 25 kPa</text>
<rect x="651.6" y="227.25" width="5.8" height="5.8" fill="#80ff90" stroke="#5a5a5a" stroke-width="0.8"/>
<text x="661.6" y="233.05" font-size="8.5" fill="#1a1a1a">25 - 30 kPa</text>
<rect x="651.6" y="237.40" width="5.8" height="5.8" fill="#90ff80" stroke="#5a5a5a" stroke-width="0.8"/>
<text x="661.6" y="243.20" font-size="8.5" fill="#1a1a1a">30 - 35 kPa</text>
<rect x="651.6" y="247.55" width="5.8" height="5.8" fill="#b0ff80" stroke="#5a5a5a" stroke-width="0.8"/>
<text x="661.6" y="253.35" font-size="8.5" fill="#1a1a1a">35 - 40 kPa</text>
<rect x="651.6" y="257.70" width="5.8" height="5.8" fill="#d8ff80" stroke="#5a5a5a" stroke-width="0.8"/>
<text x="661.6" y="263.50" font-size="8.5" fill="#1a1a1a">40 - 45 kPa</text>
<rect x="651.6" y="267.85" width="5.8" height="5.8" fill="#faff80" stroke="#5a5a5a" stroke-width="0.8"/>
<text x="661.6" y="273.65" font-size="8.5" fill="#1a1a1a">45 - 50 kPa</text>
<rect x="651.6" y="278.00" width="5.8" height="5.8" fill="#ffe080" stroke="#5a5a5a" stroke-width="0.8"/>
<text x="661.6" y="283.80" font-size="8.5" fill="#1a1a1a">50 - 55 kPa</text>
<rect x="651.6" y="288.15" width="5.8" height="5.8" fill="#ffbc80" stroke="#5a5a5a" stroke-width="0.8"/>
<text x="661.6" y="293.95" font-size="8.5" fill="#1a1a1a">55 - 60 kPa</text>
<rect x="651.6" y="298.30" width="5.8" height="5.8" fill="#ff9c80" stroke="#5a5a5a" stroke-width="0.8"/>
<text x="661.6" y="304.10" font-size="8.5" fill="#1a1a1a">60 - 65 kPa</text>
<rect x="651.6" y="308.45" width="5.8" height="5.8" fill="#ff8080" stroke="#5a5a5a" stroke-width="0.8"/>
<text x="661.6" y="314.25" font-size="8.5" fill="#1a1a1a">65 - 70 kPa</text>
</svg>
</body></html>
